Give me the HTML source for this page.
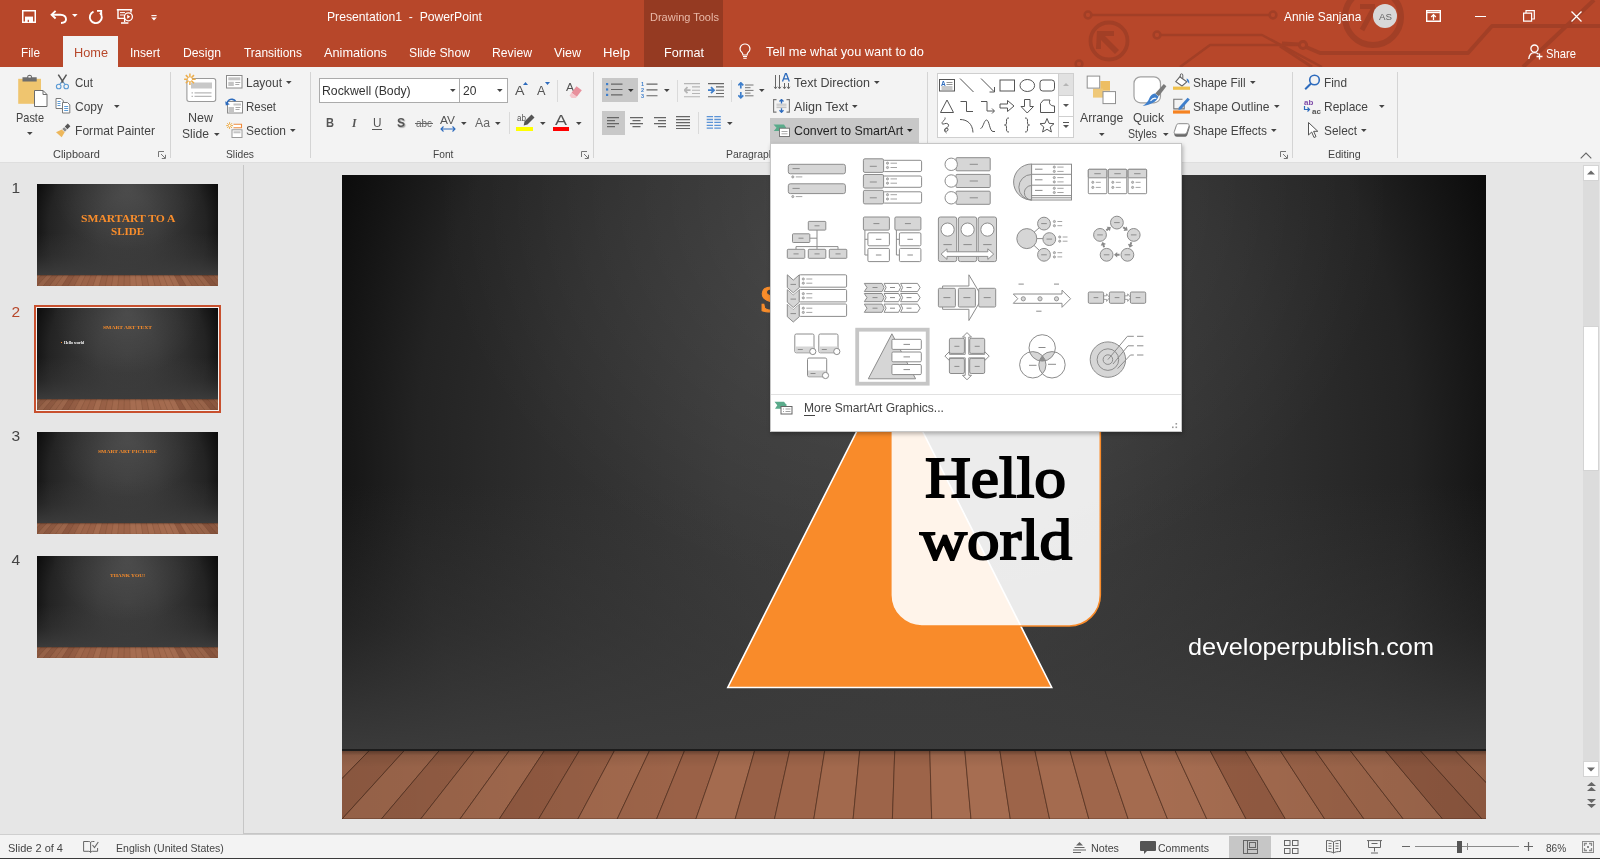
<!DOCTYPE html>
<html lang="en"><head><meta charset="utf-8"><title>Presentation1 - PowerPoint</title>
<style>
*{margin:0;padding:0}
html,body{width:1600px;height:859px;overflow:hidden;background:#e6e6e6}
body{font-family:"Liberation Sans",sans-serif;}
#app{position:relative;width:1600px;height:859px;overflow:hidden;background:#e6e6e6;will-change:transform}
.b{position:absolute;display:block}
.t{position:absolute;white-space:pre;line-height:1;transform-origin:0 50%;font-family:"Liberation Sans",sans-serif}

</style></head>
<body>
<div id="app">
<div class="b" style="left:0px;top:0px;width:1600px;height:67px;background:#B7472A;"></div>
<div class="b" style="left:644px;top:0px;width:79px;height:67px;background:#953a22;"></div>
<div class="b" style="left:63px;top:36px;width:55px;height:31px;background:#f3f3f3;"></div>
<div class="b" style="left:0px;top:67px;width:1600px;height:95px;background:#f3f3f3;"></div>
<div class="b" style="left:0px;top:162px;width:1600px;height:1px;background:#dedede;"></div>
<div class="b" style="left:0px;top:163px;width:1600px;height:672px;background:#e6e6e6;"></div>
<div class="b" style="left:243px;top:165px;width:1px;height:669px;background:#c6c6c6;"></div>
<div class="b" style="left:244px;top:833px;width:1356px;height:1px;background:#c6c6c6;"></div>
<div class="b" style="left:0px;top:835px;width:1600px;height:24px;background:#f3f3f3;"></div>
<div class="b" style="left:0px;top:834px;width:1600px;height:1px;background:#cfcfcf;"></div>
<div class="b" style="left:0px;top:858px;width:1600px;height:1px;background:#3a3a3a;"></div>
<div id="editor">
<div class="b" id="slide" style="left:342px;top:175px;width:1144px;height:644px;background:linear-gradient(to top, rgba(60,60,60,.96) 11%, rgba(60,60,60,.8) 17%, rgba(60,60,60,.42) 30%, rgba(60,60,60,0) 52%),radial-gradient(ellipse 42% 62% at 50% 4%, rgba(255,255,255,.1) 0%, rgba(255,255,255,.05) 45%, rgba(255,255,255,0) 100%),radial-gradient(ellipse 58% 120% at 50% 45%, #3d3d3d 0%, #393939 28%, #2e2e2e 55%, #232323 75%, #0a0a0a 95%, #000 100%);overflow:hidden">
<svg class="b" style="left:0;top:575px" width="1144" height="69" viewBox="0 0 1144 69"><g id="floorG"><rect width="1144" height="69" fill="#9d6449"/><path d="M-112.2 0L-77.2 0L-157.1 69L-196.4 69z" fill="#a46b4f" stroke="#4e2e20" stroke-opacity=".75" stroke-width=".9"/><path d="M-77.2 0L-42.2 0L-117.8 69L-157.1 69z" fill="#a46b4f" stroke="#4e2e20" stroke-opacity=".75" stroke-width=".9"/><path d="M-42.2 0L-7.2 0L-78.5 69L-117.8 69z" fill="#a46b4f" stroke="#4e2e20" stroke-opacity=".75" stroke-width=".9"/><path d="M-7.2 0L27.8 0L-39.2 69L-78.5 69z" fill="#a66d51" stroke="#4e2e20" stroke-opacity=".75" stroke-width=".9"/><path d="M27.8 0L62.8 0L0.1 69L-39.2 69z" fill="#986046" stroke="#4e2e20" stroke-opacity=".75" stroke-width=".9"/><path d="M62.8 0L97.8 0L39.4 69L0.1 69z" fill="#a46b4f" stroke="#4e2e20" stroke-opacity=".75" stroke-width=".9"/><path d="M97.8 0L132.8 0L78.7 69L39.4 69z" fill="#986046" stroke="#4e2e20" stroke-opacity=".75" stroke-width=".9"/><path d="M132.8 0L167.8 0L118.0 69L78.7 69z" fill="#a2694d" stroke="#4e2e20" stroke-opacity=".75" stroke-width=".9"/><path d="M167.8 0L202.8 0L157.3 69L118.0 69z" fill="#a46b4f" stroke="#4e2e20" stroke-opacity=".75" stroke-width=".9"/><path d="M202.8 0L237.8 0L196.6 69L157.3 69z" fill="#935b42" stroke="#4e2e20" stroke-opacity=".75" stroke-width=".9"/><path d="M237.8 0L272.8 0L235.9 69L196.6 69z" fill="#986046" stroke="#4e2e20" stroke-opacity=".75" stroke-width=".9"/><path d="M272.8 0L307.8 0L275.2 69L235.9 69z" fill="#a2694d" stroke="#4e2e20" stroke-opacity=".75" stroke-width=".9"/><path d="M307.8 0L342.8 0L314.6 69L275.2 69z" fill="#9d6449" stroke="#4e2e20" stroke-opacity=".75" stroke-width=".9"/><path d="M342.8 0L377.8 0L353.9 69L314.6 69z" fill="#9a6147" stroke="#4e2e20" stroke-opacity=".75" stroke-width=".9"/><path d="M377.8 0L412.8 0L393.2 69L353.9 69z" fill="#a46b4f" stroke="#4e2e20" stroke-opacity=".75" stroke-width=".9"/><path d="M412.8 0L447.8 0L432.5 69L393.2 69z" fill="#986046" stroke="#4e2e20" stroke-opacity=".75" stroke-width=".9"/><path d="M447.8 0L482.8 0L471.8 69L432.5 69z" fill="#9d6449" stroke="#4e2e20" stroke-opacity=".75" stroke-width=".9"/><path d="M482.8 0L517.8 0L511.1 69L471.8 69z" fill="#a2694d" stroke="#4e2e20" stroke-opacity=".75" stroke-width=".9"/><path d="M517.8 0L552.8 0L550.4 69L511.1 69z" fill="#9d6449" stroke="#4e2e20" stroke-opacity=".75" stroke-width=".9"/><path d="M552.8 0L587.8 0L589.7 69L550.4 69z" fill="#9d6449" stroke="#4e2e20" stroke-opacity=".75" stroke-width=".9"/><path d="M587.8 0L622.8 0L629.0 69L589.7 69z" fill="#a66d51" stroke="#4e2e20" stroke-opacity=".75" stroke-width=".9"/><path d="M622.8 0L657.8 0L668.3 69L629.0 69z" fill="#a66d51" stroke="#4e2e20" stroke-opacity=".75" stroke-width=".9"/><path d="M657.8 0L692.8 0L707.6 69L668.3 69z" fill="#9d6449" stroke="#4e2e20" stroke-opacity=".75" stroke-width=".9"/><path d="M692.8 0L727.8 0L746.9 69L707.6 69z" fill="#a46b4f" stroke="#4e2e20" stroke-opacity=".75" stroke-width=".9"/><path d="M727.8 0L762.8 0L786.2 69L746.9 69z" fill="#9f664b" stroke="#4e2e20" stroke-opacity=".75" stroke-width=".9"/><path d="M762.8 0L797.8 0L825.5 69L786.2 69z" fill="#a46b4f" stroke="#4e2e20" stroke-opacity=".75" stroke-width=".9"/><path d="M797.8 0L832.8 0L864.8 69L825.5 69z" fill="#a66d51" stroke="#4e2e20" stroke-opacity=".75" stroke-width=".9"/><path d="M832.8 0L867.8 0L904.1 69L864.8 69z" fill="#a66d51" stroke="#4e2e20" stroke-opacity=".75" stroke-width=".9"/><path d="M867.8 0L902.8 0L943.4 69L904.1 69z" fill="#935b42" stroke="#4e2e20" stroke-opacity=".75" stroke-width=".9"/><path d="M902.8 0L937.8 0L982.7 69L943.4 69z" fill="#a46b4f" stroke="#4e2e20" stroke-opacity=".75" stroke-width=".9"/><path d="M937.8 0L972.8 0L1022.0 69L982.7 69z" fill="#9d6449" stroke="#4e2e20" stroke-opacity=".75" stroke-width=".9"/><path d="M972.8 0L1007.8 0L1061.3 69L1022.0 69z" fill="#a2694d" stroke="#4e2e20" stroke-opacity=".75" stroke-width=".9"/><path d="M1007.8 0L1042.8 0L1100.6 69L1061.3 69z" fill="#a46b4f" stroke="#4e2e20" stroke-opacity=".75" stroke-width=".9"/><path d="M1042.8 0L1077.8 0L1140.0 69L1100.6 69z" fill="#935b42" stroke="#4e2e20" stroke-opacity=".75" stroke-width=".9"/><path d="M1077.8 0L1112.8 0L1179.3 69L1140.0 69z" fill="#9a6147" stroke="#4e2e20" stroke-opacity=".75" stroke-width=".9"/><path d="M1112.8 0L1147.8 0L1218.6 69L1179.3 69z" fill="#a2694d" stroke="#4e2e20" stroke-opacity=".75" stroke-width=".9"/><path d="M1147.8 0L1182.8 0L1257.9 69L1218.6 69z" fill="#935b42" stroke="#4e2e20" stroke-opacity=".75" stroke-width=".9"/><path d="M1182.8 0L1217.8 0L1297.2 69L1257.9 69z" fill="#9f664b" stroke="#4e2e20" stroke-opacity=".75" stroke-width=".9"/><path d="M1217.8 0L1252.8 0L1336.5 69L1297.2 69z" fill="#a66d51" stroke="#4e2e20" stroke-opacity=".75" stroke-width=".9"/><path d="M1252.8 0L1287.8 0L1375.8 69L1336.5 69z" fill="#935b42" stroke="#4e2e20" stroke-opacity=".75" stroke-width=".9"/><defs><linearGradient id="fg" x1="0" y1="0" x2="0" y2="1"><stop offset="0" stop-color="#000" stop-opacity=".38"/><stop offset=".08" stop-color="#000" stop-opacity=".08"/><stop offset=".25" stop-color="#000" stop-opacity="0"/><stop offset="1" stop-color="#000" stop-opacity="0"/></linearGradient><linearGradient id="fh" x1="0" y1="0" x2="1" y2="0"><stop offset="0" stop-color="#000" stop-opacity=".1"/><stop offset=".3" stop-color="#000" stop-opacity="0"/><stop offset=".7" stop-color="#000" stop-opacity="0"/><stop offset="1" stop-color="#000" stop-opacity=".1"/></linearGradient></defs><rect width="1144" height="69" fill="url(#fg)"/><rect width="1144" height="69" fill="url(#fh)"/></g></svg>
<div class="b" style="left:0;top:574px;width:1144px;height:2px;background:#1c1c1c"></div>
</div>
<span class="t" style="left:760.0px;top:279.7px;font-size:38px;color:#F98D2B;transform:scaleX(1.0410);font-weight:700;font-family:'Liberation Serif',serif;-webkit-text-stroke:1px #F98D2B;">S</span>
<svg class="b" style="left:700px;top:350px" width="450" height="350" viewBox="700 350 450 350"><path d="M889.7 366L1051.7 687.5L727.8 687.5z" fill="#F98B2A" stroke="#fff" stroke-width="1.6" stroke-linejoin="miter"/><rect x="890.8" y="380" width="209.5" height="246" rx="31" ry="31" fill="#fff" fill-opacity=".9" stroke="#F98B2A" stroke-width="1.6"/></svg>
<span class="t" style="left:925.0px;top:449.1px;font-size:58px;color:#000;transform:scaleX(1.0943);font-family:'Liberation Serif',serif;-webkit-text-stroke:1.9px #000;">Hello</span>
<span class="t" style="left:919.5px;top:510.5px;font-size:58px;color:#000;transform:scaleX(1.1233);font-family:'Liberation Serif',serif;-webkit-text-stroke:1.9px #000;">world</span>
<span class="t" style="left:1188.0px;top:634.8px;font-size:24px;color:#fff;transform:scaleX(1.0536);">developerpublish.com</span>
</div>
<div id="thumbnails">
<span class="t" style="left:11.5px;top:180.3px;font-size:15.5px;color:#444;transform:scaleX(1.0000);">1</span>
<div class="b" style="left:37px;top:184px;width:181px;height:102px;background:linear-gradient(to top, rgba(60,60,60,.96) 11%, rgba(60,60,60,.8) 17%, rgba(60,60,60,.42) 30%, rgba(60,60,60,0) 52%),radial-gradient(ellipse 42% 62% at 50% 4%, rgba(255,255,255,.1) 0%, rgba(255,255,255,.05) 45%, rgba(255,255,255,0) 100%),radial-gradient(ellipse 58% 120% at 50% 45%, #3d3d3d 0%, #393939 28%, #2e2e2e 55%, #232323 75%, #0a0a0a 95%, #000 100%);overflow:hidden">
<svg class="b" style="left:0;top:91px" width="181" height="11" viewBox="0 0 1144 69" preserveAspectRatio="none"><use href="#floorG"/></svg>
</div>
<span class="t" style="left:11.5px;top:304.3px;font-size:15.5px;color:#B7472A;transform:scaleX(1.0000);">2</span>
<div class="b" style="left:34px;top:305px;width:187px;height:108px;background:#f3f3f3;border:2px solid #C8502E;box-sizing:border-box;"></div>
<div class="b" style="left:37px;top:308px;width:181px;height:102px;background:linear-gradient(to top, rgba(60,60,60,.96) 11%, rgba(60,60,60,.8) 17%, rgba(60,60,60,.42) 30%, rgba(60,60,60,0) 52%),radial-gradient(ellipse 42% 62% at 50% 4%, rgba(255,255,255,.1) 0%, rgba(255,255,255,.05) 45%, rgba(255,255,255,0) 100%),radial-gradient(ellipse 58% 120% at 50% 45%, #3d3d3d 0%, #393939 28%, #2e2e2e 55%, #232323 75%, #0a0a0a 95%, #000 100%);overflow:hidden">
<svg class="b" style="left:0;top:91px" width="181" height="11" viewBox="0 0 1144 69" preserveAspectRatio="none"><use href="#floorG"/></svg>
</div>
<span class="t" style="left:11.5px;top:428.3px;font-size:15.5px;color:#444;transform:scaleX(1.0000);">3</span>
<div class="b" style="left:37px;top:432px;width:181px;height:102px;background:linear-gradient(to top, rgba(60,60,60,.96) 11%, rgba(60,60,60,.8) 17%, rgba(60,60,60,.42) 30%, rgba(60,60,60,0) 52%),radial-gradient(ellipse 42% 62% at 50% 4%, rgba(255,255,255,.1) 0%, rgba(255,255,255,.05) 45%, rgba(255,255,255,0) 100%),radial-gradient(ellipse 58% 120% at 50% 45%, #3d3d3d 0%, #393939 28%, #2e2e2e 55%, #232323 75%, #0a0a0a 95%, #000 100%);overflow:hidden">
<svg class="b" style="left:0;top:91px" width="181" height="11" viewBox="0 0 1144 69" preserveAspectRatio="none"><use href="#floorG"/></svg>
</div>
<span class="t" style="left:11.5px;top:552.3px;font-size:15.5px;color:#444;transform:scaleX(1.0000);">4</span>
<div class="b" style="left:37px;top:556px;width:181px;height:102px;background:linear-gradient(to top, rgba(60,60,60,.96) 11%, rgba(60,60,60,.8) 17%, rgba(60,60,60,.42) 30%, rgba(60,60,60,0) 52%),radial-gradient(ellipse 42% 62% at 50% 4%, rgba(255,255,255,.1) 0%, rgba(255,255,255,.05) 45%, rgba(255,255,255,0) 100%),radial-gradient(ellipse 58% 120% at 50% 45%, #3d3d3d 0%, #393939 28%, #2e2e2e 55%, #232323 75%, #0a0a0a 95%, #000 100%);overflow:hidden">
<svg class="b" style="left:0;top:91px" width="181" height="11" viewBox="0 0 1144 69" preserveAspectRatio="none"><use href="#floorG"/></svg>
</div>
<span class="t" style="left:80.5px;top:213.9px;font-size:10.5px;color:#F98D2B;transform:scaleX(1.1062);font-weight:700;font-family:'Liberation Serif',serif;">SMARTART TO A</span>
<span class="t" style="left:111.0px;top:227.1px;font-size:10.5px;color:#F98D2B;transform:scaleX(1.0534);font-weight:700;font-family:'Liberation Serif',serif;">SLIDE</span>
<span class="t" style="left:103.0px;top:324.9px;font-size:5px;color:#F98D2B;transform:scaleX(1.1179);font-weight:700;font-family:'Liberation Serif',serif;">SMART ART TEXT</span>
<div class="b" style="left:61px;top:342px;width:1px;height:1px;background:#F98D2B;"></div>
<span class="t" style="left:64.0px;top:341.6px;font-size:3.6px;color:#fff;transform:scaleX(1.1051);font-weight:700;font-family:'Liberation Serif',serif;">Hello world</span>
<span class="t" style="left:98.0px;top:448.9px;font-size:5px;color:#F98D2B;transform:scaleX(1.1172);font-weight:700;font-family:'Liberation Serif',serif;">SMART ART PICTURE</span>
<span class="t" style="left:110.0px;top:573.4px;font-size:5px;color:#F98D2B;transform:scaleX(1.0878);font-weight:700;font-family:'Liberation Serif',serif;">THANK YOU!</span>
</div>
<div id="vscroll">
<div class="b" style="left:1583px;top:165px;width:16px;height:612px;background:#dcdcdc;"></div>
<div class="b" style="left:1583px;top:165px;width:16px;height:16px;background:#fff;border:1px solid #d4d4d4;box-sizing:border-box;"></div>
<svg class="b" style="left:1587px;top:170px;" width="8" height="5" viewBox="0 0 8 5"><path d="M0 4.500L4 .4L8 4.500z" fill="#6a6a6a"/></svg>
<div class="b" style="left:1583px;top:326px;width:16px;height:145px;background:#fff;border:1px solid #d4d4d4;box-sizing:border-box;"></div>
<div class="b" style="left:1583px;top:761px;width:16px;height:16px;background:#fff;border:1px solid #d4d4d4;box-sizing:border-box;"></div>
<svg class="b" style="left:1587px;top:767px;" width="8" height="5" viewBox="0 0 8 5"><path d="M0 .4L4 4.500L8 .4z" fill="#6a6a6a"/></svg>
<svg class="b" style="left:1587px;top:782px;" width="9" height="9" viewBox="0 0 9 9"><path d="M0 4L4.500 0L9 4z M0 9L4.500 5L9 9z" fill="#666"/></svg>
<svg class="b" style="left:1587px;top:799px;" width="9" height="9" viewBox="0 0 9 9"><path d="M0 0L4.500 4L9 0z M0 5L4.500 9L9 5z" fill="#666"/></svg>
</div>
<div id="titlebar">
<svg class="b" style="left:1040px;top:0" width="560" height="67" viewBox="1040 0 560 67"><g fill="none" stroke="#a23f26" stroke-width="2.5" stroke-linecap="butt" stroke-linejoin="round"><path d="M1091.500 15H1269.500"/><circle cx="1088" cy="15" r="3.400"/><circle cx="1273" cy="15" r="3.400"/><path d="M1160.500 35H1262L1322 67"/><circle cx="1157" cy="35" r="3.400"/><path d="M1299.500 45H1210L1180 67"/><circle cx="1109" cy="41" r="18.500" stroke-width="3.800"/><circle cx="1079" cy="64" r="3.400"/></g><g fill="none" stroke="#a23f26" stroke-width="4" stroke-linejoin="round"><circle cx="1303" cy="45" r="3.600" stroke-width="3"/><circle cx="1373" cy="17" r="28" stroke-width="6"/><path d="M1360 6.500h15M1374.500 7L1362 30" stroke-width="5"/><path d="M1306 47L1320 53H1468L1492 26H1600"/><path d="M1280 46L1312 67" stroke-width="3"/><path d="M1282 43L1299 44" stroke-width="3"/><path d="M1523 67L1594 0"/></g><path d="M1097 31h17v5h-9l14 14-4 4-14-14v9h-5z" fill="#a23f26"/></svg>
<svg class="b" style="left:22px;top:10px;" width="15" height="14" viewBox="0 0 15 14"><path d="M.75.75h12.500v11.500H.75z" fill="none" stroke="#fff" stroke-width="1.500"/><path d="M3 6.600h8v6H3z" fill="#fff"/><rect x="5.700" y="9.800" width="1.200" height="2.300" fill="#B7472A"/></svg>
<svg class="b" style="left:50px;top:9px;" width="18" height="16" viewBox="0 0 18 16"><path d="M5.600 1.900L1.600 5.700L5.600 9.500" fill="none" stroke="#fff" stroke-width="1.900" stroke-linejoin="miter"/><path d="M2 5.700H10.500C14 5.700 16 7.800 16 10.300C16 12.800 13.800 14 11 14" fill="none" stroke="#fff" stroke-width="1.900"/></svg>
<svg class="b" style="left:72px;top:14px;" width="6" height="3" viewBox="0 0 6 3"><path d="M0 0h5.6L2.8 3z" fill="#fff"/></svg>
<svg class="b" style="left:88px;top:8px;" width="16" height="17" viewBox="0 0 16 17"><path d="M5.500 3.600A6 6 0 1 0 12 4.800" fill="none" stroke="#fff" stroke-width="1.900"/><path d="M9 2.900H13.300V7" fill="none" stroke="#fff" stroke-width="1.700"/></svg>
<svg class="b" style="left:116px;top:9px;" width="18" height="15" viewBox="0 0 18 15"><path d="M.8.8h15.4M2 1v8.4h7.2M15 1v2.6" fill="none" stroke="#fff" stroke-width="1.4"/><circle cx="12.4" cy="7.8" r="4" fill="none" stroke="#fff" stroke-width="1.3"/><path d="M11.2 5.8v4l3-2z" fill="#fff"/><path d="M4 3.6h5M4 6h4" stroke="#fff" stroke-width="1"/><path d="M8.6 10v3M5 14h7.4" stroke="#fff" stroke-width="1.3"/></svg>
<svg class="b" style="left:151px;top:15px;" width="6" height="6" viewBox="0 0 6 6"><path d="M.4.6h5.2" stroke="#fff" stroke-width="1.1"/><path d="M.2 2.6h5.6L3 5.6z" fill="#fff"/></svg>
<span class="t" style="left:327.0px;top:11.3px;font-size:12.2px;color:#fff;transform:scaleX(0.9981);">Presentation1  -  PowerPoint</span>
<span class="t" style="left:650.0px;top:11.8px;font-size:11.2px;color:#e9b9a8;transform:scaleX(0.9838);">Drawing Tools</span>
<span class="t" style="left:1283.6px;top:11.3px;font-size:12.2px;color:#fff;transform:scaleX(0.9752);">Annie Sanjana</span>
<div class="b" style="left:1373px;top:4px;width:24px;height:24px;border-radius:12px;background:#d8d8d8"></div>
<span class="t" style="left:1378.6px;top:11.5px;font-size:9.6px;color:#666;transform:scaleX(1.0151);">AS</span>
<svg class="b" style="left:1426px;top:10px;" width="15" height="12" viewBox="0 0 15 12"><path d="M.7.7h13.6v10.6H.7z" fill="none" stroke="#fff" stroke-width="1.4"/><path d="M1 2.6h13" stroke="#fff" stroke-width="1.2"/><path d="M7.5 10V5M5.2 7L7.5 4.6 9.800 7" fill="none" stroke="#fff" stroke-width="1.3"/></svg>
<div class="b" style="left:1475px;top:16px;width:11px;height:1px;background:#fff;"></div>
<svg class="b" style="left:1523px;top:10px;" width="12" height="12" viewBox="0 0 12 12"><path d="M.6 3.2h8v8h-8z" fill="none" stroke="#fff" stroke-width="1.2"/><path d="M3 3V.7h8.300v8.300H9" fill="none" stroke="#fff" stroke-width="1.2"/></svg>
<svg class="b" style="left:1571px;top:11px;" width="11" height="11" viewBox="0 0 11 11"><path d="M.5.5l10 10M10.5.5l-10 10" stroke="#fff" stroke-width="1.3"/></svg>
<span class="t" style="left:21.0px;top:46.7px;font-size:12.6px;color:#fff;transform:scaleX(0.9358);">File</span>
<span class="t" style="left:73.6px;top:46.7px;font-size:12.6px;color:#B7472A;transform:scaleX(1.0116);">Home</span>
<span class="t" style="left:130.0px;top:46.7px;font-size:12.6px;color:#fff;transform:scaleX(0.9520);">Insert</span>
<span class="t" style="left:182.6px;top:46.7px;font-size:12.6px;color:#fff;transform:scaleX(0.9688);">Design</span>
<span class="t" style="left:243.6px;top:46.7px;font-size:12.6px;color:#fff;transform:scaleX(0.9484);">Transitions</span>
<span class="t" style="left:324.0px;top:46.7px;font-size:12.6px;color:#fff;transform:scaleX(1.0107);">Animations</span>
<span class="t" style="left:409.0px;top:46.7px;font-size:12.6px;color:#fff;transform:scaleX(0.9676);">Slide Show</span>
<span class="t" style="left:492.0px;top:46.7px;font-size:12.6px;color:#fff;transform:scaleX(0.9682);">Review</span>
<span class="t" style="left:554.0px;top:46.7px;font-size:12.6px;color:#fff;transform:scaleX(0.9969);">View</span>
<span class="t" style="left:603.0px;top:46.7px;font-size:12.6px;color:#fff;transform:scaleX(1.0419);">Help</span>
<span class="t" style="left:664.0px;top:46.7px;font-size:12.6px;color:#fff;transform:scaleX(1.0024);">Format</span>
<svg class="b" style="left:739px;top:43px;" width="12" height="17" viewBox="0 0 12 17"><path d="M6 1a4.800 4.800 0 0 1 3 8.600c-.7.7-.9 1.400-.9 2.400H3.900c0-1-.2-1.700-.9-2.400A4.800 4.800 0 0 1 6 1z" fill="none" stroke="#fff" stroke-width="1.2"/><path d="M4 13.500h4M4.300 15.300h3.400" stroke="#fff" stroke-width="1.1"/></svg>
<span class="t" style="left:766.0px;top:46.4px;font-size:12.4px;color:#fff;transform:scaleX(1.0326);">Tell me what you want to do</span>
<svg class="b" style="left:1528px;top:44px;" width="15" height="16" viewBox="0 0 15 16"><circle cx="6.500" cy="4.600" r="3.600" fill="none" stroke="#fff" stroke-width="1.3"/><path d="M.8 15c.3-4 2.500-6.400 5.700-6.400 1.600 0 3 .6 4 1.700" fill="none" stroke="#fff" stroke-width="1.3"/><path d="M11.500 9.500v6M8.500 12.500h6" stroke="#fff" stroke-width="1.3"/></svg>
<span class="t" style="left:1546.0px;top:47.8px;font-size:12.6px;color:#fff;transform:scaleX(0.8922);">Share</span>
</div>
<div id="ribbon">
<svg class="b" style="left:17px;top:74px;" width="31" height="33" viewBox="0 0 31 33"><path d="M1.200 4.800h22.800v25H1.200z" fill="#EFC56F"/><path d="M5.500 3.200h4.600c.2-1.600 1.200-2.400 2.500-2.400s2.300.8 2.500 2.400h4.600v4.200H5.500z" fill="#6d6d6d"/><rect x="11.400" y="2" width="2.400" height="1.600" fill="#f3f3f3"/><path d="M17.500 16.500h8.500l4 4V32.500h-12.500z" fill="#fff" stroke="#6d6d6d" stroke-width="1"/><path d="M26 16.500v4h4" fill="none" stroke="#6d6d6d" stroke-width="1"/></svg>
<span class="t" style="left:16.0px;top:111.9px;font-size:12.2px;color:#444;transform:scaleX(0.8975);">Paste</span>
<svg class="b" style="left:27px;top:132px;" width="6" height="3" viewBox="0 0 6 3"><path d="M0 0h5.6L2.8 3z" fill="#444"/></svg>
<svg class="b" style="left:55px;top:74px;" width="15" height="16" viewBox="0 0 15 16"><path d="M3.300 .6l5.300 8.200M11.500 .6L6.200 8.800" stroke="#555" stroke-width="1.500" fill="none"/><path d="M8.300 8.300l2 2.200M6.500 8.300l-2 2.200" stroke="#5b9bd5" stroke-width="1.100" fill="none"/><circle cx="3.700" cy="12.500" r="2.300" fill="none" stroke="#5b9bd5" stroke-width="1.100"/><circle cx="11.200" cy="12.500" r="2.300" fill="none" stroke="#5b9bd5" stroke-width="1.100"/></svg>
<span class="t" style="left:75.0px;top:76.5px;font-size:12.2px;color:#444;transform:scaleX(0.9481);">Cut</span>
<svg class="b" style="left:55px;top:98px;" width="16" height="16" viewBox="0 0 16 16"><path d="M1 .5h5l2.300 2.300v7.700H1z" fill="#fff" stroke="#7a7a7a"/><path d="M7.500 4.500h5l2.300 2.300v8.200H7.500z" fill="#fff" stroke="#7a7a7a"/><path d="M9.200 8.500h4M9.200 10.500h4M9.200 12.500h4" stroke="#5b9bd5" stroke-width="1"/><path d="M2.500 3.500h3M2.500 5.500h3M2.500 7.500h3" stroke="#5b9bd5" stroke-width="1"/></svg>
<span class="t" style="left:75.0px;top:100.5px;font-size:12.2px;color:#444;transform:scaleX(0.9831);">Copy</span>
<svg class="b" style="left:114px;top:105px;" width="6" height="3" viewBox="0 0 6 3"><path d="M0 0h5.6L2.8 3z" fill="#444"/></svg>
<svg class="b" style="left:56px;top:123px;" width="15" height="15" viewBox="0 0 15 15"><path d="M11.800 .6l2.600 2.600-3 3-2.600-2.600z" fill="#555"/><path d="M8.200 4.200l2.600 2.600-1.900 1.900-2.600-2.600z" fill="#8a8a8a"/><path d="M5.800 6.400l2.900 2.900-3 5-5.700-5z" fill="#EDB75B"/></svg>
<span class="t" style="left:75.0px;top:124.5px;font-size:12.2px;color:#444;transform:scaleX(0.9915);">Format Painter</span>
<span class="t" style="left:53.0px;top:148.0px;font-size:11.6px;color:#444;transform:scaleX(0.9466);">Clipboard</span>
<svg class="b" style="left:158px;top:151px;" width="8" height="8" viewBox="0 0 8 8"><path d="M.5 6V.5H6" fill="none" stroke="#777" stroke-width="1"/><path d="M3 3l4 4M7.500 3.800V7.500H3.800" fill="none" stroke="#777" stroke-width="1"/></svg>
<div class="b" style="left:170px;top:72px;width:1px;height:86px;background:#d4d4d4;"></div>
<svg class="b" style="left:183px;top:73px;" width="34" height="30" viewBox="0 0 34 30"><rect x="3.900" y="5.500" width="28.800" height="23" rx="2.200" fill="#fff" stroke="#9a9a9a" stroke-width="1.100"/><rect x="8" y="9.500" width="21" height="6" fill="#c8c8c8"/><path d="M8.500 19.800h1.500M11.500 19.800h17M8.500 23.300h1.500M11.500 23.300h17" stroke="#b8b8b8" stroke-width="1.200"/><g stroke="#EDAE4C" stroke-width="1.500"><path d="M6.900 .4v11.600M1.100 6.200h11.600M2.800 2.100l8.200 8.200M11 2.100l-8.200 8.200"/></g><circle cx="6.900" cy="6.200" r="2" fill="#fff"/></svg>
<span class="t" style="left:188.0px;top:111.9px;font-size:12.2px;color:#444;transform:scaleX(1.0243);">New</span>
<span class="t" style="left:182.0px;top:127.5px;font-size:12.2px;color:#444;transform:scaleX(0.9952);">Slide</span>
<svg class="b" style="left:214px;top:133px;" width="6" height="3" viewBox="0 0 6 3"><path d="M0 0h5.6L2.8 3z" fill="#444"/></svg>
<svg class="b" style="left:226px;top:75px;" width="17" height="14" viewBox="0 0 17 14"><rect x=".5" y=".5" width="15.500" height="12.500" fill="#fff" stroke="#8a8a8a"/><rect x="2.300" y="2.300" width="12" height="3" fill="#c4c4c4"/><rect x="2.300" y="6.800" width="5.500" height="4.200" fill="#c4c4c4"/><path d="M9.300 7.500h5M9.300 9.500h4" stroke="#a0a0a0" stroke-width=".9"/></svg>
<span class="t" style="left:246.0px;top:76.5px;font-size:12.2px;color:#444;transform:scaleX(0.9828);">Layout</span>
<svg class="b" style="left:286px;top:81px;" width="6" height="3" viewBox="0 0 6 3"><path d="M0 0h5.6L2.8 3z" fill="#444"/></svg>
<svg class="b" style="left:225px;top:98px;" width="18" height="16" viewBox="0 0 18 16"><rect x="2.500" y="3.500" width="15" height="11.500" fill="#fff" stroke="#8a8a8a"/><rect x="3.500" y="9" width="5.500" height="5.500" fill="#c4c4c4"/><rect x="8.500" y="5.500" width="7.500" height="2" fill="#c4c4c4"/><path d="M10.500 9.500h5M10.500 11.500h4" stroke="#a0a0a0" stroke-width=".9"/><path d="M2 5.500C2.500 2.500 5 1 7.500 1.300c1.300.200 2.300.800 3 1.700" fill="none" stroke="#2d6bbd" stroke-width="1.700"/><path d="M.2 3.200l.6 4.300 4-1.300z" fill="#2d6bbd"/></svg>
<span class="t" style="left:246.0px;top:100.5px;font-size:12.2px;color:#444;transform:scaleX(0.9413);">Reset</span>
<svg class="b" style="left:226px;top:122px;" width="18" height="16" viewBox="0 0 18 16"><path d="M7.500 2.300H15.500V5.800H7.500" fill="#fff" stroke="#EE8A3C" stroke-width="1.100"/><rect x="6" y="7.800" width="10" height="7.700" fill="#fff" stroke="#9a9a9a"/><rect x="7.500" y="9.300" width="7" height="2" fill="#c4c4c4"/><g stroke="#EDAE4C" stroke-width="1"><path d="M3.600 .2v6.800M.2 3.600h6.800M1.200 1.200l4.800 4.800M6 1.200L1.200 6"/></g><circle cx="3.600" cy="3.600" r="1.100" fill="#fff"/></svg>
<span class="t" style="left:246.0px;top:124.5px;font-size:12.2px;color:#444;transform:scaleX(0.9830);">Section</span>
<svg class="b" style="left:289.5px;top:129px;" width="6" height="3" viewBox="0 0 6 3"><path d="M0 0h5.6L2.8 3z" fill="#444"/></svg>
<span class="t" style="left:226.0px;top:148.0px;font-size:11.6px;color:#444;transform:scaleX(0.8862);">Slides</span>
<div class="b" style="left:310px;top:72px;width:1px;height:86px;background:#d4d4d4;"></div>
<div class="b" style="left:319px;top:78px;width:141px;height:25px;background:#fff;border:1px solid #ababab;box-sizing:border-box;"></div>
<div class="b" style="left:459px;top:78px;width:49px;height:25px;background:#fff;border:1px solid #ababab;box-sizing:border-box;"></div>
<span class="t" style="left:321.6px;top:84.5px;font-size:12.2px;color:#333;transform:scaleX(1.0075);">Rockwell (Body)</span>
<svg class="b" style="left:450px;top:89px;" width="6" height="3" viewBox="0 0 6 3"><path d="M0 0h5.6L2.8 3z" fill="#444"/></svg>
<span class="t" style="left:462.6px;top:84.5px;font-size:12.2px;color:#333;transform:scaleX(0.9874);">20</span>
<svg class="b" style="left:497px;top:89px;" width="6" height="3" viewBox="0 0 6 3"><path d="M0 0h5.6L2.8 3z" fill="#444"/></svg>
<span class="t" style="left:515.0px;top:84.2px;font-size:13.5px;color:#555;transform:scaleX(1.0550);">A</span>
<svg class="b" style="left:523px;top:82px;" width="5" height="3" viewBox="0 0 5 3"><path d="M0 3L2.500 0L5 3z" fill="#2d6bbd"/></svg>
<span class="t" style="left:537.0px;top:85.4px;font-size:12px;color:#555;transform:scaleX(1.0619);">A</span>
<svg class="b" style="left:545px;top:82px;" width="5" height="3" viewBox="0 0 5 3"><path d="M0 0L2.500 3L5 0z" fill="#2d6bbd"/></svg>
<div class="b" style="left:557px;top:80px;width:1px;height:22px;background:#dadada;"></div>
<span class="t" style="left:566.0px;top:81.9px;font-size:11.5px;color:#555;transform:scaleX(1.0429);">A</span>
<svg class="b" style="left:568px;top:85px;" width="15" height="13" viewBox="0 0 15 13"><path d="M8.500 1.200l5.300 4-5 6.600-5.300-4z" fill="#E8909C"/><path d="M3.500 7.800l5.300 4-1 1.200H3.600L1.500 10.600z" fill="#f5c6cc"/></svg>
<span class="t" style="left:326.0px;top:116.9px;font-size:12.6px;color:#555;transform:scaleX(0.8792);font-weight:700;">B</span>
<span class="t" style="left:351.5px;top:116.9px;font-size:12.6px;color:#555;transform:scaleX(0.9178);font-weight:700;font-family:'Liberation Serif',serif;font-style:italic;">I</span>
<span class="t" style="left:372.5px;top:116.5px;font-size:12.2px;color:#555;transform:scaleX(0.9647);">U</span>
<div class="b" style="left:372px;top:129px;width:10px;height:1px;background:#555;"></div>
<span class="t" style="left:397.0px;top:115.8px;font-size:13px;color:#555;transform:scaleX(0.9226);font-weight:700;text-shadow:1px 1px 1px #aaa;">S</span>
<span class="t" style="left:416.0px;top:117.9px;font-size:10.5px;color:#666;transform:scaleX(0.9451);">abc</span>
<div class="b" style="left:415px;top:123px;width:18px;height:1px;background:#666;"></div>
<span class="t" style="left:440.0px;top:114.8px;font-size:11px;color:#555;transform:scaleX(1.0824);">AV</span>
<svg class="b" style="left:440px;top:126px;" width="16" height="6" viewBox="0 0 16 6"><path d="M1 3h14M3.500 .5L1 3l2.500 2.500M12.500 .5L15 3l-2.500 2.500" fill="none" stroke="#2d6bbd" stroke-width="1.100"/></svg>
<svg class="b" style="left:461px;top:122px;" width="6" height="3" viewBox="0 0 6 3"><path d="M0 0h5.6L2.8 3z" fill="#444"/></svg>
<span class="t" style="left:475.0px;top:116.5px;font-size:12.2px;color:#666;transform:scaleX(1.0052);">Aa</span>
<svg class="b" style="left:495px;top:122px;" width="6" height="3" viewBox="0 0 6 3"><path d="M0 0h5.6L2.8 3z" fill="#444"/></svg>
<div class="b" style="left:509px;top:112px;width:1px;height:22px;background:#dadada;"></div>
<span class="t" style="left:517.0px;top:114.2px;font-size:8.5px;color:#555;transform:scaleX(0.9519);">ab</span>
<svg class="b" style="left:521px;top:114px;" width="14" height="14" viewBox="0 0 14 14"><path d="M10.500 .5l3 3-7 7-3.800.9.800-3.900z" fill="#555"/></svg>
<div class="b" style="left:516px;top:127px;width:17px;height:4px;background:#FFFF00;"></div>
<svg class="b" style="left:540px;top:122px;" width="6" height="3" viewBox="0 0 6 3"><path d="M0 0h5.6L2.8 3z" fill="#444"/></svg>
<span class="t" style="left:555.0px;top:112.4px;font-size:15px;color:#555;transform:scaleX(1.1993);">A</span>
<div class="b" style="left:553px;top:127px;width:16px;height:4px;background:#FF0000;"></div>
<svg class="b" style="left:576px;top:122px;" width="6" height="3" viewBox="0 0 6 3"><path d="M0 0h5.6L2.8 3z" fill="#444"/></svg>
<span class="t" style="left:432.6px;top:148.0px;font-size:11.6px;color:#444;transform:scaleX(0.8789);">Font</span>
<svg class="b" style="left:581px;top:151px;" width="8" height="8" viewBox="0 0 8 8"><path d="M.5 6V.5H6" fill="none" stroke="#777" stroke-width="1"/><path d="M3 3l4 4M7.500 3.800V7.500H3.800" fill="none" stroke="#777" stroke-width="1"/></svg>
<div class="b" style="left:593px;top:72px;width:1px;height:86px;background:#d4d4d4;"></div>
<div class="b" style="left:602px;top:78px;width:36px;height:24px;background:#c8c8c8;"></div>
<svg class="b" style="left:606px;top:82px;" width="17" height="15" viewBox="0 0 17 15"><g fill="#3f7fcb"><rect x="0" y="1" width="2.200" height="2.200"/><rect x="0" y="6.400" width="2.200" height="2.200"/><rect x="0" y="11.800" width="2.200" height="2.200"/></g><path d="M5 2.1H16.5M5 7.5H16.5M5 12.9H16.5" stroke="#666" stroke-width="1.1" fill="none"/></svg>
<svg class="b" style="left:628px;top:89px;" width="6" height="3" viewBox="0 0 6 3"><path d="M0 0h5.6L2.8 3z" fill="#333"/></svg>
<svg class="b" style="left:641px;top:81px;" width="17" height="17" viewBox="0 0 17 17"><g fill="#3f7fcb" font-size="5.500" font-weight="700" font-family="Liberation Sans"><text x="0" y="5">1</text><text x="0" y="11">2</text><text x="0" y="17">3</text></g><path d="M5.5 3.1H16.5M5.5 8.9H16.5M5.5 14.7H16.5" stroke="#666" stroke-width="1.1" fill="none"/></svg>
<svg class="b" style="left:664px;top:89px;" width="6" height="3" viewBox="0 0 6 3"><path d="M0 0h5.6L2.8 3z" fill="#444"/></svg>
<div class="b" style="left:677px;top:80px;width:1px;height:22px;background:#dadada;"></div>
<svg class="b" style="left:684px;top:83px;" width="17" height="15" viewBox="0 0 17 15"><path d="M0 0.6H16M8 3.9H16M8 7.2H16M8 10.5H16M0 13.8H16" stroke="#b5b5b5" stroke-width="1.1" fill="none"/><path d="M6.500 7.200H.8M3.500 4.200l-3 3 3 3" fill="none" stroke="#b5b5b5" stroke-width="1.800"/></svg>
<svg class="b" style="left:708px;top:83px;" width="17" height="15" viewBox="0 0 17 15"><path d="M0 0.6H16M8 3.9H16M8 7.2H16M8 10.5H16M0 13.8H16" stroke="#666" stroke-width="1.1" fill="none"/><path d="M0 7.200h5.700M3 4.200l3 3-3 3" fill="none" stroke="#3f7fcb" stroke-width="1.800"/></svg>
<div class="b" style="left:731px;top:80px;width:1px;height:22px;background:#dadada;"></div>
<svg class="b" style="left:738px;top:82px;" width="18" height="17" viewBox="0 0 18 17"><path d="M7 3H15.5M7 5.7H12.5M7 8.4H15.5M7 11.1H12.5M7 13.8H15.5" stroke="#777" stroke-width="1" fill="none"/><path d="M2.800 .8v5.700M.3 3.300L2.800 .8l2.500 2.500M2.800 15.800v-5.700M.3 13.300l2.500 2.500 2.500-2.500" fill="none" stroke="#3f7fcb" stroke-width="1.700"/></svg>
<svg class="b" style="left:759px;top:89px;" width="6" height="3" viewBox="0 0 6 3"><path d="M0 0h5.6L2.8 3z" fill="#444"/></svg>
<div class="b" style="left:602px;top:111px;width:23px;height:24px;background:#c8c8c8;"></div>
<svg class="b" style="left:607px;top:117px;" width="13" height="12" viewBox="0 0 13 12"><path d="M0 0.6H12M0 3.6H8M0 6.6H12M0 9.6H8" stroke="#666" stroke-width="1.1" fill="none"/></svg>
<svg class="b" style="left:630px;top:117px;" width="14" height="12" viewBox="0 0 14 12"><path d="M0 0.6H13M2.5 3.6H10.5M0 6.6H13M2.5 9.6H10.5" stroke="#666" stroke-width="1.1" fill="none"/></svg>
<svg class="b" style="left:654px;top:117px;" width="13" height="12" viewBox="0 0 13 12"><path d="M0 0.6H12M4 3.6H12M0 6.6H12M4 9.6H12" stroke="#666" stroke-width="1.1" fill="none"/></svg>
<svg class="b" style="left:676px;top:116px;" width="15" height="13" viewBox="0 0 15 13"><path d="M0 0.6H14M0 3.6H14M0 6.6H14M0 9.6H14M0 12.6H14" stroke="#666" stroke-width="1.1" fill="none"/></svg>
<div class="b" style="left:698px;top:112px;width:1px;height:22px;background:#dadada;"></div>
<svg class="b" style="left:706px;top:116px;" width="16" height="13" viewBox="0 0 16 13"><path d="M0.7 0.6H7M8.3 0.6H14.8M0.7 3.5H7M8.3 3.5H14.8M0.7 6.4H7M8.3 6.4H14.8M0.7 9.3H7M8.3 9.3H14.8M0.7 12.2H7M8.3 12.2H14.8" stroke="#5b93d6" stroke-width="1.3" fill="none"/></svg>
<svg class="b" style="left:727px;top:122px;" width="6" height="3" viewBox="0 0 6 3"><path d="M0 0h5.6L2.8 3z" fill="#444"/></svg>
<span class="t" style="left:726.0px;top:148.0px;font-size:11.6px;color:#444;transform:scaleX(0.8953);">Paragraph</span>
<svg class="b" style="left:773px;top:73px;" width="18" height="17" viewBox="0 0 18 17"><path d="M2.500 2v13.500M6.500 2v13.500M11.500 10v5.500M15.500 10v5.500" stroke="#666" stroke-width="1"/><path d="M1 13.800l1.500 2 1.500-2M5 13.800l1.500 2 1.500-2M10 13.800l1.500 2 1.500-2M14 13.800l1.500 2 1.500-2" fill="none" stroke="#666" stroke-width=".9"/><path d="M9.500 8.500l3-8h.8l3 8M10.600 5.800h5" fill="none" stroke="#2d6bbd" stroke-width="1.300"/></svg>
<span class="t" style="left:793.6px;top:76.5px;font-size:12.2px;color:#444;transform:scaleX(1.0284);">Text Direction</span>
<svg class="b" style="left:874px;top:81px;" width="6" height="3" viewBox="0 0 6 3"><path d="M0 0h5.6L2.8 3z" fill="#444"/></svg>
<svg class="b" style="left:773px;top:99px;" width="18" height="14" viewBox="0 0 18 14"><path d="M3.500 .6H.6v12.500H3.500M13.500 .6h2.900v12.500H13.500" fill="none" stroke="#777" stroke-width="1.100"/><path d="M3.500 5.200h10M3.500 6.900h10M3.500 8.600h10" stroke="#b0b0b0" stroke-width=".8"/><path d="M8.500 .5v4M6.500 2.500L8.500 .5l2 2M8.500 13.300v-4M6.500 11.300l2 2 2-2" fill="none" stroke="#2d6bbd" stroke-width="1.300"/></svg>
<span class="t" style="left:793.6px;top:100.5px;font-size:12.2px;color:#444;transform:scaleX(1.0328);">Align Text</span>
<svg class="b" style="left:852px;top:105px;" width="6" height="3" viewBox="0 0 6 3"><path d="M0 0h5.6L2.8 3z" fill="#444"/></svg>
<div class="b" style="left:770px;top:118px;width:149px;height:25px;background:#c8c8c8;"></div>
<svg class="b" style="left:773px;top:122px;" width="18" height="16" viewBox="0 0 18 16"><path d="M.5 2.500h10.500l2 3H13v3.500H.8L3.500 5.800z" fill="#5aab8b"/><rect x="6.500" y="6.200" width="10" height="8.300" fill="#fff" stroke="#777"/><path d="M8.500 9.500h6M8.500 11.800h6" stroke="#aaa" stroke-width="1"/></svg>
<span class="t" style="left:793.6px;top:124.5px;font-size:12.2px;color:#222;transform:scaleX(1.0148);">Convert to SmartArt</span>
<svg class="b" style="left:907px;top:129px;" width="6" height="3" viewBox="0 0 6 3"><path d="M0 0h5.6L2.8 3z" fill="#222"/></svg>
<div class="b" style="left:927px;top:72px;width:1px;height:86px;background:#d4d4d4;"></div>
<div class="b" style="left:937px;top:73px;width:137px;height:65px;background:#fff;border:1px solid #cfcfcf;box-sizing:border-box;"></div>
<div class="b" style="left:1058px;top:73px;width:16px;height:23px;background:#e1e1e1;border:1px solid #cfcfcf;box-sizing:border-box;"></div>
<div class="b" style="left:1058px;top:95px;width:16px;height:22px;background:#fff;border:1px solid #cfcfcf;box-sizing:border-box;"></div>
<div class="b" style="left:1058px;top:116px;width:16px;height:22px;background:#fff;border:1px solid #cfcfcf;box-sizing:border-box;"></div>
<svg class="b" style="left:1063px;top:83px;" width="6" height="3" viewBox="0 0 6 3"><path d="M0 3L3 0L6 3z" fill="#b5b5b5"/></svg>
<svg class="b" style="left:1063px;top:104px;" width="6" height="3" viewBox="0 0 6 3"><path d="M0 0L3 3L6 0z" fill="#555"/></svg>
<svg class="b" style="left:1063px;top:122px;" width="6" height="7" viewBox="0 0 6 7"><path d="M0 .5h6" stroke="#555" stroke-width="1"/><path d="M0 3L3 6L6 3z" fill="#555"/></svg>
<svg class="b" style="left:938px;top:76px;" width="18" height="18" viewBox="0 0 18 18"><rect x="1.500" y="3.500" width="15" height="11.500" fill="none" stroke="#555" stroke-width="1"/><text x="3" y="9.500" font-size="6.500" font-weight="700" fill="#2d6bbd" font-family="Liberation Sans">A</text><path d="M8.500 6.500h6M8.500 8.500h6M3.500 11h11M3.500 13h11" stroke="#777" stroke-width=".8"/></svg>
<svg class="b" style="left:958px;top:76px;" width="18" height="18" viewBox="0 0 18 18"><path d="M2 2.500L15.500 16" fill="none" stroke="#555" stroke-width="1"/></svg>
<svg class="b" style="left:979px;top:76px;" width="18" height="18" viewBox="0 0 18 18"><path d="M2 2.500L15 15.500M15.500 11v5h-5" fill="none" stroke="#555" stroke-width="1"/></svg>
<svg class="b" style="left:998px;top:76px;" width="18" height="18" viewBox="0 0 18 18"><rect x="2" y="4" width="14.500" height="11" fill="none" stroke="#555" stroke-width="1"/></svg>
<svg class="b" style="left:1018px;top:76px;" width="18" height="18" viewBox="0 0 18 18"><ellipse cx="9.300" cy="9.500" rx="7.300" ry="6" fill="none" stroke="#555" stroke-width="1"/></svg>
<svg class="b" style="left:1038px;top:76px;" width="18" height="18" viewBox="0 0 18 18"><rect x="2" y="4" width="14.500" height="11" rx="2.800" fill="none" stroke="#555" stroke-width="1"/></svg>
<svg class="b" style="left:938px;top:97px;" width="18" height="18" viewBox="0 0 18 18"><path d="M9 3l6.500 12.500h-13z" fill="none" stroke="#555" stroke-width="1"/></svg>
<svg class="b" style="left:958px;top:97px;" width="18" height="18" viewBox="0 0 18 18"><path d="M2.500 4.500h6v10h6.500" fill="none" stroke="#555" stroke-width="1"/></svg>
<svg class="b" style="left:979px;top:97px;" width="18" height="18" viewBox="0 0 18 18"><path d="M2 4.500h6v9.500h7M13 11.500l2.500 2.500-2.500 2.500" fill="none" stroke="#555" stroke-width="1"/></svg>
<svg class="b" style="left:998px;top:97px;" width="18" height="18" viewBox="0 0 18 18"><path d="M2 7h7.500V3.500L16 9l-6.500 5.500V11H2z" fill="none" stroke="#555" stroke-width="1"/></svg>
<svg class="b" style="left:1018px;top:97px;" width="18" height="18" viewBox="0 0 18 18"><path d="M6.500 2.500h5.500v7h3.500L9.200 16 3 9.500h3.500z" fill="none" stroke="#555" stroke-width="1"/></svg>
<svg class="b" style="left:1038px;top:97px;" width="18" height="18" viewBox="0 0 18 18"><path d="M2.500 6.500L5.500 3H12c-1.500 3 0 6 4.500 6V15.500H2.500z" fill="none" stroke="#555" stroke-width="1"/></svg>
<svg class="b" style="left:938px;top:116px;" width="18" height="18" viewBox="0 0 18 18"><path d="M7 1.500c1 2.500-3.500 4-3 6 .5 2 4-1.500 6 .5 2.500 2.500-3.500 4.500-3 6.500.5 1.800 3.500.5 3-1.500-.5-1.800-3-1-3.500.5-.3 1 .5 2.500 2 3.500" fill="none" stroke="#555" stroke-width="1"/></svg>
<svg class="b" style="left:958px;top:116px;" width="18" height="18" viewBox="0 0 18 18"><path d="M2 3.500c7 0 12.500 4 13 13" fill="none" stroke="#555" stroke-width="1"/></svg>
<svg class="b" style="left:979px;top:116px;" width="18" height="18" viewBox="0 0 18 18"><path d="M1.500 12.500C4 12.500 5 4 7.500 4c3 0 3 11.500 6.500 11.500h2" fill="none" stroke="#555" stroke-width="1"/></svg>
<svg class="b" style="left:998px;top:116px;" width="18" height="18" viewBox="0 0 18 18"><path d="M11 2c-2.500 0-2.500 1-2.500 3.500S8.500 9 6.500 9c2 0 2 1 2 3.500s0 3.500 2.500 3.500" fill="none" stroke="#555" stroke-width="1"/></svg>
<svg class="b" style="left:1018px;top:116px;" width="18" height="18" viewBox="0 0 18 18"><path d="M7 2c2.500 0 2.500 1 2.500 3.500S9.500 9 11.500 9c-2 0-2 1-2 3.500s0 3.500-2.500 3.500" fill="none" stroke="#555" stroke-width="1"/></svg>
<svg class="b" style="left:1038px;top:116px;" width="18" height="18" viewBox="0 0 18 18"><path d="M9 2.500l2 4.800 5 .400-3.800 3.300 1.200 5L9 13.300 4.600 16l1.200-5L2 7.700l5-.400z" fill="none" stroke="#555" stroke-width="1"/></svg>
<svg class="b" style="left:1086px;top:75px;" width="31" height="30" viewBox="0 0 31 30"><rect x="14.400" y="6" width="9.600" height="9.700" fill="#EDBE63"/><rect x="7" y="13.600" width="10.200" height="9" fill="#EFC878"/><rect x="1.200" y="1.100" width="12.500" height="12" fill="#fff" stroke="#8f8f8f"/><rect x="17" y="16.600" width="12.500" height="12" fill="#fff" stroke="#8f8f8f"/></svg>
<span class="t" style="left:1079.6px;top:111.9px;font-size:12.2px;color:#444;transform:scaleX(0.9999);">Arrange</span>
<svg class="b" style="left:1099px;top:133px;" width="6" height="3" viewBox="0 0 6 3"><path d="M0 0h5.6L2.8 3z" fill="#444"/></svg>
<svg class="b" style="left:1132px;top:75px;" width="35" height="34" viewBox="0 0 35 34"><rect x="2" y="1.800" width="26.500" height="26" rx="6.500" fill="#fff" stroke="#a0a0a0" stroke-width="1.200"/><path d="M31.800 9l2.600 2.200-7.600 10-3.600-2.800z" fill="#7a7a7a"/><path d="M23 18.600l3.600 2.800c-1.800 5-7.500 8.400-16 9.600 3.800-2.300 5.600-4.800 6.600-7.400 1.200-3 3.400-5.200 5.800-5z" fill="#3f7fcb"/><path d="M18.500 26c1.600-2.200 3.800-3.300 5.800-2.600" fill="none" stroke="#fff" stroke-width="1.100"/></svg>
<span class="t" style="left:1132.6px;top:111.9px;font-size:12.2px;color:#444;transform:scaleX(0.9941);">Quick</span>
<span class="t" style="left:1127.6px;top:127.7px;font-size:12.2px;color:#444;transform:scaleX(0.8699);">Styles</span>
<svg class="b" style="left:1163px;top:133px;" width="6" height="3" viewBox="0 0 6 3"><path d="M0 0h5.6L2.8 3z" fill="#444"/></svg>
<svg class="b" style="left:1173px;top:73px;" width="18" height="17" viewBox="0 0 18 17"><path d="M6.800 3.800l7 5-4.800 4.200-6.200-4.400z" fill="#fff" stroke="#666" stroke-width="1.100"/><path d="M7.300 4.200V2c0-1.600 2.500-1.600 2.500 0v3.600" fill="none" stroke="#666" stroke-width="1"/><path d="M13.500 5.500c2 .5 3 2.200 2.800 5.200-1-.8-1.800-2-2.400-3.200z" fill="#3f7fcb"/><rect x="0" y="13.600" width="17" height="3.200" fill="#F0C14B"/></svg>
<span class="t" style="left:1193.4px;top:76.5px;font-size:12.2px;color:#444;transform:scaleX(0.9695);">Shape Fill</span>
<svg class="b" style="left:1250px;top:81px;" width="6" height="3" viewBox="0 0 6 3"><path d="M0 0h5.6L2.8 3z" fill="#444"/></svg>
<svg class="b" style="left:1173px;top:97px;" width="18" height="17" viewBox="0 0 18 17"><path d="M9.500 2.300H.8v9.600h10.400V8" fill="none" stroke="#777" stroke-width="1.100"/><path d="M14.600 .8l2.200 1.800-8.600 9.600-2.800.9.600-2.900z" fill="#3f7fcb"/><rect x="0" y="13.400" width="17" height="3.200" fill="#F58220"/></svg>
<span class="t" style="left:1193.4px;top:100.5px;font-size:12.2px;color:#444;transform:scaleX(0.9906);">Shape Outline</span>
<svg class="b" style="left:1274px;top:105px;" width="6" height="3" viewBox="0 0 6 3"><path d="M0 0h5.6L2.8 3z" fill="#444"/></svg>
<svg class="b" style="left:1173px;top:122px;" width="18" height="16" viewBox="0 0 18 16"><path d="M1.200 11.500c0 2 1 3.300 2.800 3.300h7.500c1.500 0 2.500-.8 3-2.300l2-6.500c.3-1 .3-2-.2-2.800L13 11.500z" fill="#6a6a6a"/><path d="M5.500 1.700h8.800c1.500 0 2.200 1 1.700 2.400l-2 6c-.4 1.300-1.300 2-2.600 2H3c-1.500 0-2.200-1-1.700-2.400l2-6c.4-1.300 1.100-2 2.200-2z" fill="#fff" stroke="#8a8a8a" stroke-width="1"/></svg>
<span class="t" style="left:1193.4px;top:124.5px;font-size:12.2px;color:#444;transform:scaleX(0.9784);">Shape Effects</span>
<svg class="b" style="left:1271px;top:129px;" width="6" height="3" viewBox="0 0 6 3"><path d="M0 0h5.6L2.8 3z" fill="#444"/></svg>
<svg class="b" style="left:1280px;top:151px;" width="8" height="8" viewBox="0 0 8 8"><path d="M.5 6V.5H6" fill="none" stroke="#777" stroke-width="1"/><path d="M3 3l4 4M7.500 3.800V7.500H3.800" fill="none" stroke="#777" stroke-width="1"/></svg>
<div class="b" style="left:1292px;top:72px;width:1px;height:86px;background:#d4d4d4;"></div>
<svg class="b" style="left:1304px;top:74px;" width="17" height="16" viewBox="0 0 17 16"><circle cx="10.500" cy="6" r="4.800" fill="none" stroke="#2d6bbd" stroke-width="1.600"/><path d="M7 9.500L1.200 15.200" stroke="#2d6bbd" stroke-width="2"/></svg>
<span class="t" style="left:1324.0px;top:76.5px;font-size:12.2px;color:#444;transform:scaleX(0.9691);">Find</span>
<svg class="b" style="left:1303px;top:98px;" width="19" height="17" viewBox="0 0 19 17"><text x="1" y="6.500" font-size="8" font-weight="700" fill="#7e4aa8" font-family="Liberation Sans">ab</text><text x="9" y="15.500" font-size="8" font-weight="700" fill="#555" font-family="Liberation Sans">ac</text><path d="M1.500 8v3.500h5M4.500 9.500l2 2-2 2" fill="none" stroke="#2d6bbd" stroke-width="1.200"/></svg>
<span class="t" style="left:1324.0px;top:100.5px;font-size:12.2px;color:#444;transform:scaleX(0.9830);">Replace</span>
<svg class="b" style="left:1379px;top:105px;" width="6" height="3" viewBox="0 0 6 3"><path d="M0 0h5.6L2.8 3z" fill="#444"/></svg>
<svg class="b" style="left:1307px;top:121px;" width="12" height="18" viewBox="0 0 12 18"><path d="M1.500 1.500v12.500l3.200-3 2.300 5.500 2-.9-2.400-5.300h4.200z" fill="#fff" stroke="#555" stroke-width="1"/></svg>
<span class="t" style="left:1324.0px;top:124.5px;font-size:12.2px;color:#444;transform:scaleX(0.9732);">Select</span>
<svg class="b" style="left:1361px;top:129px;" width="6" height="3" viewBox="0 0 6 3"><path d="M0 0h5.6L2.8 3z" fill="#444"/></svg>
<span class="t" style="left:1327.6px;top:148.0px;font-size:11.6px;color:#444;transform:scaleX(0.9247);">Editing</span>
<div class="b" style="left:1397px;top:72px;width:1px;height:86px;background:#d4d4d4;"></div>
<svg class="b" style="left:1580px;top:152px;" width="12" height="7" viewBox="0 0 12 7"><path d="M.7 6.300L6 1l5.300 5.300" fill="none" stroke="#666" stroke-width="1.100"/></svg>
</div>
<div id="statusbar">
<span class="t" style="left:8.0px;top:842.6px;font-size:11.2px;color:#444;transform:scaleX(0.9815);">Slide 2 of 4</span>
<svg class="b" style="left:83px;top:840px;" width="16" height="14" viewBox="0 0 16 14"><path d="M.6 1.500h5.200c1.200 0 1.800.600 1.800 1.500v9.500c-.3-.800-.9-1.200-1.800-1.200H.6z" fill="none" stroke="#666" stroke-width="1"/><path d="M7.600 3c0-.9.600-1.500 1.800-1.500h2" fill="none" stroke="#666" stroke-width="1"/><path d="M7.600 12.500c.3-.800.900-1.200 1.800-1.200h5.200V8" fill="none" stroke="#666" stroke-width="1"/><path d="M9.500 5l2 2.500 3.800-5.500" fill="none" stroke="#666" stroke-width="1.100"/></svg>
<span class="t" style="left:116.0px;top:842.6px;font-size:11.2px;color:#444;transform:scaleX(0.9429);">English (United States)</span>
<svg class="b" style="left:1073px;top:842px;" width="13" height="11" viewBox="0 0 13 11"><path d="M6.500 0l3.500 3.500h-7z" fill="#666"/><path d="M1.500 5.500h10M0 8h13M0 10.500h8" stroke="#666" stroke-width="1"/></svg>
<span class="t" style="left:1090.7px;top:842.6px;font-size:11.2px;color:#444;transform:scaleX(0.9570);">Notes</span>
<svg class="b" style="left:1140px;top:841px;" width="16" height="13" viewBox="0 0 16 13"><path d="M1 0h14a1 1 0 0 1 1 1v8a1 1 0 0 1-1 1H7l-3 3v-3H1a1 1 0 0 1-1-1V1a1 1 0 0 1 1-1z" fill="#555"/></svg>
<span class="t" style="left:1158.0px;top:842.6px;font-size:11.2px;color:#444;transform:scaleX(0.9419);">Comments</span>
<div class="b" style="left:1229px;top:836px;width:42px;height:22px;background:#c6c6c6;"></div>
<svg class="b" style="left:1243px;top:840px;" width="15" height="14" viewBox="0 0 15 14"><rect x=".5" y=".5" width="14" height="13" fill="none" stroke="#666" stroke-width="1"/><path d="M4.500 .5v13M4.500 9.500h10" fill="none" stroke="#666" stroke-width="1"/><rect x="6.500" y="2.500" width="6" height="5" fill="none" stroke="#666" stroke-width="1"/></svg>
<svg class="b" style="left:1284px;top:840px;" width="15" height="14" viewBox="0 0 15 14"><rect x=".5" y=".5" width="5.500" height="5" fill="none" stroke="#666" stroke-width="1"/><rect x="8.500" y=".5" width="5.500" height="5" fill="none" stroke="#666" stroke-width="1"/><rect x=".5" y="8.500" width="5.500" height="5" fill="none" stroke="#666" stroke-width="1"/><rect x="8.500" y="8.500" width="5.500" height="5" fill="none" stroke="#666" stroke-width="1"/></svg>
<svg class="b" style="left:1326px;top:840px;" width="15" height="14" viewBox="0 0 15 14"><path d="M7.500 2c-1.500-1.200-4-1.500-7-1.500v11c3 0 5.500.300 7 1.500 1.500-1.200 4-1.500 7-1.500V.5c-3 0-5.500.300-7 1.500zM7.500 2v11" fill="none" stroke="#666" stroke-width="1"/><path d="M2.500 3.500h3M2.500 6h3M2.500 8.500h3M9.500 3.500h3M9.500 6h3M9.500 8.500h3" stroke="#666" stroke-width=".9"/></svg>
<svg class="b" style="left:1367px;top:840px;" width="15" height="14" viewBox="0 0 15 14"><path d="M0 .600h15M1.500 1v6.500h12V1" fill="none" stroke="#666" stroke-width="1"/><path d="M7.500 7.500v4M4 13h7" fill="none" stroke="#666" stroke-width="1"/><path d="M4.500 3.500h6" stroke="#666" stroke-width="1"/></svg>
<div class="b" style="left:1402px;top:846px;width:8px;height:1px;background:#666;"></div>
<div class="b" style="left:1415px;top:846px;width:104px;height:1px;background:#8a8a8a;"></div>
<div class="b" style="left:1467px;top:843px;width:1px;height:7px;background:#8a8a8a;"></div>
<div class="b" style="left:1457px;top:841px;width:5px;height:12px;background:#555;"></div>
<svg class="b" style="left:1524px;top:842px;" width="9" height="9" viewBox="0 0 9 9"><path d="M0 4.500h9M4.500 0v9" stroke="#666" stroke-width="1.200"/></svg>
<span class="t" style="left:1545.8px;top:842.6px;font-size:11.2px;color:#444;transform:scaleX(0.9011);">86%</span>
<svg class="b" style="left:1582px;top:841px;" width="12" height="12" viewBox="0 0 12 12"><rect x=".5" y=".5" width="11" height="11" fill="none" stroke="#8a8a8a"/><path d="M2.500 5V2.500H5M7 2.500h2.500V5M9.500 7v2.500H7M5 9.500H2.500V7" fill="none" stroke="#8a8a8a" stroke-width="1.300"/><rect x="5" y="5" width="2" height="2" fill="#8a8a8a"/></svg>
</div>
<div id="smartart-menu">
<div class="b" style="left:770px;top:143px;width:412px;height:289px;background:#fff;border:1px solid #c6c6c6;box-sizing:border-box;box-shadow:1px 2px 4px rgba(0,0,0,.28)"></div>
<svg class="b" style="left:770px;top:143px" width="412" height="289" viewBox="0 0 412 289"><rect x="18.3" y="21.3" width="57.1" height="9.5" rx="2" fill="#d6d6d6" stroke="#8c8c8c" stroke-width="1"/><path d="M22.5 25.6H29.7" stroke="#8c8c8c" stroke-width="1"/><circle cx="22.8" cy="33.9" r="1.1" fill="#c4c4c4" stroke="#8c8c8c" stroke-width="0.7"/><path d="M25.8 33.9H32.3" stroke="#9a9a9a" stroke-width="0.9"/><rect x="18.3" y="40.8" width="57.1" height="9.8" rx="2" fill="#d6d6d6" stroke="#8c8c8c" stroke-width="1"/><path d="M22.5 45.4H29.7" stroke="#8c8c8c" stroke-width="1"/><circle cx="22.8" cy="53.6" r="1.1" fill="#c4c4c4" stroke="#8c8c8c" stroke-width="0.7"/><path d="M25.8 53.6H32.3" stroke="#9a9a9a" stroke-width="0.9"/><rect x="113.0" y="17.3" width="38.6" height="11.3" rx="1.5" fill="#fff" stroke="#8c8c8c" stroke-width="1"/><rect x="93.4" y="15.8" width="20.2" height="13.6" rx="1.5" fill="#d6d6d6" stroke="#8c8c8c" stroke-width="1"/><path d="M99.8 23.3H106.8" stroke="#8c8c8c" stroke-width="1"/><circle cx="117.5" cy="20.2" r="1.1" fill="#c4c4c4" stroke="#8c8c8c" stroke-width="0.7"/><path d="M120.5 20.2H127.0" stroke="#9a9a9a" stroke-width="0.9"/><circle cx="117.5" cy="24.5" r="1.1" fill="#c4c4c4" stroke="#8c8c8c" stroke-width="0.7"/><path d="M120.5 24.5H127.0" stroke="#9a9a9a" stroke-width="0.9"/><rect x="113.0" y="33.0" width="38.6" height="11.3" rx="1.5" fill="#fff" stroke="#8c8c8c" stroke-width="1"/><rect x="93.4" y="31.5" width="20.2" height="13.6" rx="1.5" fill="#d6d6d6" stroke="#8c8c8c" stroke-width="1"/><path d="M99.8 39.0H106.8" stroke="#8c8c8c" stroke-width="1"/><circle cx="117.5" cy="35.9" r="1.1" fill="#c4c4c4" stroke="#8c8c8c" stroke-width="0.7"/><path d="M120.5 35.9H127.0" stroke="#9a9a9a" stroke-width="0.9"/><circle cx="117.5" cy="40.2" r="1.1" fill="#c4c4c4" stroke="#8c8c8c" stroke-width="0.7"/><path d="M120.5 40.2H127.0" stroke="#9a9a9a" stroke-width="0.9"/><rect x="113.0" y="48.8" width="38.6" height="11.3" rx="1.5" fill="#fff" stroke="#8c8c8c" stroke-width="1"/><rect x="93.4" y="47.3" width="20.2" height="13.6" rx="1.5" fill="#d6d6d6" stroke="#8c8c8c" stroke-width="1"/><path d="M99.8 54.8H106.8" stroke="#8c8c8c" stroke-width="1"/><circle cx="117.5" cy="51.7" r="1.1" fill="#c4c4c4" stroke="#8c8c8c" stroke-width="0.7"/><path d="M120.5 51.7H127.0" stroke="#9a9a9a" stroke-width="0.9"/><circle cx="117.5" cy="56.0" r="1.1" fill="#c4c4c4" stroke="#8c8c8c" stroke-width="0.7"/><path d="M120.5 56.0H127.0" stroke="#9a9a9a" stroke-width="0.9"/><rect x="186.0" y="14.7" width="34.2" height="13.1" rx="1" fill="#d6d6d6" stroke="#8c8c8c" stroke-width="1"/><path d="M199.7 21.3H207.9" stroke="#8c8c8c" stroke-width="1"/><circle cx="181.2" cy="21.3" r="6.2" fill="#fff" stroke="#8c8c8c" stroke-width="1"/><rect x="186.0" y="31.4" width="34.2" height="13.1" rx="1" fill="#d6d6d6" stroke="#8c8c8c" stroke-width="1"/><path d="M199.7 38.0H207.9" stroke="#8c8c8c" stroke-width="1"/><circle cx="181.2" cy="38.0" r="6.2" fill="#fff" stroke="#8c8c8c" stroke-width="1"/><rect x="186.0" y="48.2" width="34.2" height="13.1" rx="1" fill="#d6d6d6" stroke="#8c8c8c" stroke-width="1"/><path d="M199.7 54.8H207.9" stroke="#8c8c8c" stroke-width="1"/><circle cx="181.2" cy="54.8" r="6.2" fill="#fff" stroke="#8c8c8c" stroke-width="1"/><path d="M261.6 21A18 18 0 0 0 261.6 57z" fill="#d6d6d6" stroke="#8c8c8c" stroke-width="1" /><path d="M261.6 31.5A12.700 12.700 0 0 0 261.6 57" fill="none" stroke="#8c8c8c" stroke-width="1" /><path d="M261.6 42.5A7.200 7.200 0 0 0 261.6 57" fill="none" stroke="#8c8c8c" stroke-width="1" /><rect x="261.6" y="21.2" width="39.9" height="35.8" rx="0" fill="#fff" stroke="#8c8c8c" stroke-width="1"/><path d="M261.6 31.3H301.5" fill="none" stroke="#8c8c8c" stroke-width="1" /><path d="M265.0 26.2H272.5" stroke="#8c8c8c" stroke-width="1"/><circle cx="284.3" cy="24.1" r="1.1" fill="#c4c4c4" stroke="#8c8c8c" stroke-width="0.7"/><path d="M287.3 24.1H293.6" stroke="#9a9a9a" stroke-width="0.9"/><circle cx="284.3" cy="28.4" r="1.1" fill="#c4c4c4" stroke="#8c8c8c" stroke-width="0.7"/><path d="M287.3 28.4H293.6" stroke="#9a9a9a" stroke-width="0.9"/><path d="M261.6 42.2H301.5" fill="none" stroke="#8c8c8c" stroke-width="1" /><path d="M265.0 36.8H272.5" stroke="#8c8c8c" stroke-width="1"/><circle cx="284.3" cy="34.6" r="1.1" fill="#c4c4c4" stroke="#8c8c8c" stroke-width="0.7"/><path d="M287.3 34.6H293.6" stroke="#9a9a9a" stroke-width="0.9"/><circle cx="284.3" cy="38.9" r="1.1" fill="#c4c4c4" stroke="#8c8c8c" stroke-width="0.7"/><path d="M287.3 38.9H293.6" stroke="#9a9a9a" stroke-width="0.9"/><path d="M261.6 52.6H301.5" fill="none" stroke="#8c8c8c" stroke-width="1" /><path d="M265.0 47.4H272.5" stroke="#8c8c8c" stroke-width="1"/><circle cx="284.3" cy="45.3" r="1.1" fill="#c4c4c4" stroke="#8c8c8c" stroke-width="0.7"/><path d="M287.3 45.3H293.6" stroke="#9a9a9a" stroke-width="0.9"/><circle cx="284.3" cy="49.5" r="1.1" fill="#c4c4c4" stroke="#8c8c8c" stroke-width="0.7"/><path d="M287.3 49.5H293.6" stroke="#9a9a9a" stroke-width="0.9"/><path d="M261.6 54.800H301.5" fill="none" stroke="#8c8c8c" stroke-width="1" /><rect x="318.3" y="26.3" width="18.5" height="24.4" rx="0.8" fill="#fff" stroke="#8c8c8c" stroke-width="1"/><rect x="318.3" y="26.3" width="18.5" height="8.5" rx="0.8" fill="#d6d6d6" stroke="#8c8c8c" stroke-width="1"/><path d="M324.3 30.7H330.8" stroke="#8c8c8c" stroke-width="1"/><circle cx="322.8" cy="39.3" r="1.1" fill="#c4c4c4" stroke="#8c8c8c" stroke-width="0.7"/><path d="M325.8 39.3H330.8" stroke="#9a9a9a" stroke-width="0.9"/><circle cx="322.8" cy="44.4" r="1.1" fill="#c4c4c4" stroke="#8c8c8c" stroke-width="0.7"/><path d="M325.8 44.4H330.8" stroke="#9a9a9a" stroke-width="0.9"/><rect x="338.3" y="26.3" width="18.5" height="24.4" rx="0.8" fill="#fff" stroke="#8c8c8c" stroke-width="1"/><rect x="338.3" y="26.3" width="18.5" height="8.5" rx="0.8" fill="#d6d6d6" stroke="#8c8c8c" stroke-width="1"/><path d="M344.3 30.7H350.8" stroke="#8c8c8c" stroke-width="1"/><circle cx="342.8" cy="39.3" r="1.1" fill="#c4c4c4" stroke="#8c8c8c" stroke-width="0.7"/><path d="M345.8 39.3H350.8" stroke="#9a9a9a" stroke-width="0.9"/><circle cx="342.8" cy="44.4" r="1.1" fill="#c4c4c4" stroke="#8c8c8c" stroke-width="0.7"/><path d="M345.8 44.4H350.8" stroke="#9a9a9a" stroke-width="0.9"/><rect x="358.1" y="26.3" width="18.5" height="24.4" rx="0.8" fill="#fff" stroke="#8c8c8c" stroke-width="1"/><rect x="358.1" y="26.3" width="18.5" height="8.5" rx="0.8" fill="#d6d6d6" stroke="#8c8c8c" stroke-width="1"/><path d="M364.1 30.7H370.6" stroke="#8c8c8c" stroke-width="1"/><circle cx="362.6" cy="39.3" r="1.1" fill="#c4c4c4" stroke="#8c8c8c" stroke-width="0.7"/><path d="M365.6 39.3H370.6" stroke="#9a9a9a" stroke-width="0.9"/><circle cx="362.6" cy="44.4" r="1.1" fill="#c4c4c4" stroke="#8c8c8c" stroke-width="0.7"/><path d="M365.6 44.4H370.6" stroke="#9a9a9a" stroke-width="0.9"/><path d="M47 87V106M26 106.3V103.6H68V106.3M39.800 95.200H47" fill="none" stroke="#8c8c8c" stroke-width="1" /><rect x="38.3" y="78.4" width="17.5" height="8.7" rx="0.8" fill="#d6d6d6" stroke="#8c8c8c" stroke-width="1"/><path d="M44.5 82.8H49.5" stroke="#8c8c8c" stroke-width="1"/><rect x="22.5" y="90.8" width="17.3" height="8.7" rx="0.8" fill="#d6d6d6" stroke="#8c8c8c" stroke-width="1"/><path d="M28.5 95.2H33.5" stroke="#8c8c8c" stroke-width="1"/><rect x="17.3" y="106.3" width="17.5" height="9.0" rx="0.8" fill="#d6d6d6" stroke="#8c8c8c" stroke-width="1"/><path d="M23.5 110.9H28.6" stroke="#8c8c8c" stroke-width="1"/><rect x="38.3" y="106.3" width="17.5" height="9.0" rx="0.8" fill="#d6d6d6" stroke="#8c8c8c" stroke-width="1"/><path d="M44.5 110.9H49.6" stroke="#8c8c8c" stroke-width="1"/><rect x="59.3" y="106.3" width="17.5" height="9.0" rx="0.8" fill="#d6d6d6" stroke="#8c8c8c" stroke-width="1"/><path d="M65.5 110.9H70.6" stroke="#8c8c8c" stroke-width="1"/><path d="M94.9 87V112H97.9M94.9 96.300H97.9" fill="none" stroke="#8c8c8c" stroke-width="1" /><rect x="93.4" y="74.0" width="26.0" height="13.1" rx="1.2" fill="#d6d6d6" stroke="#8c8c8c" stroke-width="1"/><path d="M103.4 80.6H109.4" stroke="#8c8c8c" stroke-width="1"/><rect x="97.9" y="89.8" width="21.5" height="13.0" rx="1.2" fill="#fff" stroke="#8c8c8c" stroke-width="1"/><path d="M105.9 96.3H111.4" stroke="#8c8c8c" stroke-width="1"/><rect x="97.9" y="105.4" width="21.5" height="13.2" rx="1.2" fill="#fff" stroke="#8c8c8c" stroke-width="1"/><path d="M105.9 112.0H111.4" stroke="#8c8c8c" stroke-width="1"/><path d="M126.4 87V112H129.4M126.4 96.300H129.4" fill="none" stroke="#8c8c8c" stroke-width="1" /><rect x="124.9" y="74.0" width="26.0" height="13.1" rx="1.2" fill="#d6d6d6" stroke="#8c8c8c" stroke-width="1"/><path d="M134.9 80.6H140.9" stroke="#8c8c8c" stroke-width="1"/><rect x="129.4" y="89.8" width="21.5" height="13.0" rx="1.2" fill="#fff" stroke="#8c8c8c" stroke-width="1"/><path d="M137.4 96.3H142.9" stroke="#8c8c8c" stroke-width="1"/><rect x="129.4" y="105.4" width="21.5" height="13.2" rx="1.2" fill="#fff" stroke="#8c8c8c" stroke-width="1"/><path d="M137.4 112.0H142.9" stroke="#8c8c8c" stroke-width="1"/><rect x="168.4" y="74.0" width="18.3" height="44.6" rx="2" fill="#d6d6d6" stroke="#8c8c8c" stroke-width="1"/><circle cx="177.6" cy="86.6" r="6.6" fill="#fff" stroke="#8c8c8c" stroke-width="1"/><path d="M173.4 101.6H181.8" stroke="#8c8c8c" stroke-width="1"/><rect x="188.4" y="74.0" width="18.3" height="44.6" rx="2" fill="#d6d6d6" stroke="#8c8c8c" stroke-width="1"/><circle cx="197.6" cy="86.6" r="6.6" fill="#fff" stroke="#8c8c8c" stroke-width="1"/><path d="M193.4 101.6H201.8" stroke="#8c8c8c" stroke-width="1"/><rect x="208.2" y="74.0" width="18.3" height="44.6" rx="2" fill="#d6d6d6" stroke="#8c8c8c" stroke-width="1"/><circle cx="217.4" cy="86.6" r="6.6" fill="#fff" stroke="#8c8c8c" stroke-width="1"/><path d="M213.2 101.6H221.6" stroke="#8c8c8c" stroke-width="1"/><path d="M171.100 111.100L177 105.800V108.800H217.800V105.800L223.700 111.100L217.800 116.400V113.400H177V116.400z" fill="#fff" stroke="#8c8c8c" stroke-width="1" /><path d="M256.8 95.6L274 80.6M256.8 95.6H279.3M256.8 95.6L274 111.8" fill="none" stroke="#8c8c8c" stroke-width="1" /><circle cx="256.8" cy="95.6" r="10.0" fill="#d6d6d6" stroke="#8c8c8c" stroke-width="1"/><circle cx="274.0" cy="80.6" r="6.4" fill="#d6d6d6" stroke="#8c8c8c" stroke-width="1"/><path d="M271.2 80.6H276.8" stroke="#8c8c8c" stroke-width="1"/><circle cx="284.4" cy="78.5" r="1.1" fill="#c4c4c4" stroke="#8c8c8c" stroke-width="0.7"/><path d="M287.4 78.5H292.2" stroke="#9a9a9a" stroke-width="0.9"/><circle cx="284.4" cy="82.7" r="1.1" fill="#c4c4c4" stroke="#8c8c8c" stroke-width="0.7"/><path d="M287.4 82.7H292.2" stroke="#9a9a9a" stroke-width="0.9"/><circle cx="279.3" cy="96.1" r="6.4" fill="#d6d6d6" stroke="#8c8c8c" stroke-width="1"/><path d="M276.5 96.1H282.1" stroke="#8c8c8c" stroke-width="1"/><circle cx="289.7" cy="94.0" r="1.1" fill="#c4c4c4" stroke="#8c8c8c" stroke-width="0.7"/><path d="M292.7 94.0H297.5" stroke="#9a9a9a" stroke-width="0.9"/><circle cx="289.7" cy="98.2" r="1.1" fill="#c4c4c4" stroke="#8c8c8c" stroke-width="0.7"/><path d="M292.7 98.2H297.5" stroke="#9a9a9a" stroke-width="0.9"/><circle cx="274.0" cy="111.8" r="6.4" fill="#d6d6d6" stroke="#8c8c8c" stroke-width="1"/><path d="M271.2 111.8H276.8" stroke="#8c8c8c" stroke-width="1"/><circle cx="284.4" cy="109.7" r="1.1" fill="#c4c4c4" stroke="#8c8c8c" stroke-width="0.7"/><path d="M287.4 109.7H292.2" stroke="#9a9a9a" stroke-width="0.9"/><circle cx="284.4" cy="113.9" r="1.1" fill="#c4c4c4" stroke="#8c8c8c" stroke-width="0.7"/><path d="M287.4 113.9H292.2" stroke="#9a9a9a" stroke-width="0.9"/><path d="M-2.600 -1h2.400v-1.800L3 0L-.2 2.800V1H-2.600z" fill="#8a8a8a" transform="translate(355.3 85.8) rotate(36.2)"/><path d="M-2.600 -1h2.400v-1.800L3 0L-.2 2.800V1H-2.600z" fill="#8a8a8a" transform="translate(360.5 101.8) rotate(107.6)"/><path d="M-2.600 -1h2.400v-1.800L3 0L-.2 2.800V1H-2.600z" fill="#8a8a8a" transform="translate(347.0 111.8) rotate(180.0)"/><path d="M-2.600 -1h2.400v-1.800L3 0L-.2 2.800V1H-2.600z" fill="#8a8a8a" transform="translate(333.3 101.8) rotate(-108.3)"/><path d="M-2.600 -1h2.400v-1.800L3 0L-.2 2.800V1H-2.600z" fill="#8a8a8a" transform="translate(338.4 85.8) rotate(-36.0)"/><circle cx="346.9" cy="79.6" r="6.4" fill="#d6d6d6" stroke="#8c8c8c" stroke-width="1"/><path d="M344.1 79.6H349.7" stroke="#8c8c8c" stroke-width="1"/><circle cx="363.7" cy="91.9" r="6.4" fill="#d6d6d6" stroke="#8c8c8c" stroke-width="1"/><path d="M360.9 91.9H366.5" stroke="#8c8c8c" stroke-width="1"/><circle cx="357.4" cy="111.8" r="6.4" fill="#d6d6d6" stroke="#8c8c8c" stroke-width="1"/><path d="M354.6 111.8H360.2" stroke="#8c8c8c" stroke-width="1"/><circle cx="336.6" cy="111.8" r="6.4" fill="#d6d6d6" stroke="#8c8c8c" stroke-width="1"/><path d="M333.8 111.8H339.4" stroke="#8c8c8c" stroke-width="1"/><circle cx="330.0" cy="91.9" r="6.4" fill="#d6d6d6" stroke="#8c8c8c" stroke-width="1"/><path d="M327.2 91.9H332.8" stroke="#8c8c8c" stroke-width="1"/><path d="M17.3 161L23.300 166.3L29.3 161V173.7L23.300 179L17.3 173.7z" fill="#d6d6d6" stroke="#fff" stroke-width="2.6" /><path d="M17.3 161L23.300 166.3L29.3 161V173.7L23.300 179L17.3 173.7z" fill="#d6d6d6" stroke="#8c8c8c" stroke-width="1" /><path d="M20.5 170.6H26.0" stroke="#8c8c8c" stroke-width="1"/><path d="M17.3 146.5L23.300 151.8L29.3 146.5V159.2L23.300 164.5L17.3 159.2z" fill="#d6d6d6" stroke="#fff" stroke-width="2.6" /><path d="M17.3 146.5L23.300 151.8L29.3 146.5V159.2L23.300 164.5L17.3 159.2z" fill="#d6d6d6" stroke="#8c8c8c" stroke-width="1" /><path d="M20.5 156.1H26.0" stroke="#8c8c8c" stroke-width="1"/><path d="M17.3 131.8L23.300 137.10000000000002L29.3 131.8V144.5L23.300 149.8L17.3 144.5z" fill="#d6d6d6" stroke="#fff" stroke-width="2.6" /><path d="M17.3 131.8L23.300 137.10000000000002L29.3 131.8V144.5L23.300 149.8L17.3 144.5z" fill="#d6d6d6" stroke="#8c8c8c" stroke-width="1" /><path d="M20.5 141.4H26.0" stroke="#8c8c8c" stroke-width="1"/><rect x="29.3" y="131.8" width="47.3" height="12.4" rx="1.2" fill="#fff" stroke="#8c8c8c" stroke-width="1"/><circle cx="33.3" cy="136.0" r="1.1" fill="#c4c4c4" stroke="#8c8c8c" stroke-width="0.7"/><path d="M36.3 136.0H42.3" stroke="#9a9a9a" stroke-width="0.9"/><circle cx="33.3" cy="140.2" r="1.1" fill="#c4c4c4" stroke="#8c8c8c" stroke-width="0.7"/><path d="M36.3 140.2H42.3" stroke="#9a9a9a" stroke-width="0.9"/><rect x="29.3" y="146.5" width="47.3" height="12.4" rx="1.2" fill="#fff" stroke="#8c8c8c" stroke-width="1"/><circle cx="33.3" cy="150.7" r="1.1" fill="#c4c4c4" stroke="#8c8c8c" stroke-width="0.7"/><path d="M36.3 150.7H42.3" stroke="#9a9a9a" stroke-width="0.9"/><circle cx="33.3" cy="154.9" r="1.1" fill="#c4c4c4" stroke="#8c8c8c" stroke-width="0.7"/><path d="M36.3 154.9H42.3" stroke="#9a9a9a" stroke-width="0.9"/><rect x="29.3" y="161.0" width="47.3" height="12.4" rx="1.2" fill="#fff" stroke="#8c8c8c" stroke-width="1"/><circle cx="33.3" cy="165.2" r="1.1" fill="#c4c4c4" stroke="#8c8c8c" stroke-width="0.7"/><path d="M36.3 165.2H42.3" stroke="#9a9a9a" stroke-width="0.9"/><circle cx="33.3" cy="169.4" r="1.1" fill="#c4c4c4" stroke="#8c8c8c" stroke-width="0.7"/><path d="M36.3 169.4H42.3" stroke="#9a9a9a" stroke-width="0.9"/><path d="M114.100 140.4H128.600L130.600 144.5L128.600 148.6H114.100L116.100 144.5z" fill="#fff" stroke="#8c8c8c" stroke-width="1" /><path d="M120.0 144.5H125.0" stroke="#8c8c8c" stroke-width="1"/><path d="M130.600 140.4H147.500L150.100 144.5L147.500 148.6H130.600L132.600 144.5z" fill="#fff" stroke="#8c8c8c" stroke-width="1" /><path d="M136.5 144.5H141.5" stroke="#8c8c8c" stroke-width="1"/><path d="M94.300 140.4H112L114.100 144.5L112 148.6H94.300L97 144.5z" fill="#d6d6d6" stroke="#8c8c8c" stroke-width="1" /><path d="M102.5 144.5H107.5" stroke="#8c8c8c" stroke-width="1"/><path d="M114.100 150.5H128.600L130.600 154.6L128.600 158.7H114.100L116.100 154.6z" fill="#fff" stroke="#8c8c8c" stroke-width="1" /><path d="M120.0 154.6H125.0" stroke="#8c8c8c" stroke-width="1"/><path d="M130.600 150.5H147.500L150.100 154.6L147.500 158.7H130.600L132.600 154.6z" fill="#fff" stroke="#8c8c8c" stroke-width="1" /><path d="M136.5 154.6H141.5" stroke="#8c8c8c" stroke-width="1"/><path d="M94.300 150.5H112L114.100 154.6L112 158.7H94.300L97 154.6z" fill="#d6d6d6" stroke="#8c8c8c" stroke-width="1" /><path d="M102.5 154.6H107.5" stroke="#8c8c8c" stroke-width="1"/><path d="M114.100 161.1H128.600L130.600 165.2L128.600 169.29999999999998H114.100L116.100 165.2z" fill="#fff" stroke="#8c8c8c" stroke-width="1" /><path d="M120.0 165.2H125.0" stroke="#8c8c8c" stroke-width="1"/><path d="M130.600 161.1H147.500L150.100 165.2L147.500 169.29999999999998H130.600L132.600 165.2z" fill="#fff" stroke="#8c8c8c" stroke-width="1" /><path d="M136.5 165.2H141.5" stroke="#8c8c8c" stroke-width="1"/><path d="M94.300 161.1H112L114.100 165.2L112 169.29999999999998H94.300L97 165.2z" fill="#d6d6d6" stroke="#8c8c8c" stroke-width="1" /><path d="M102.5 165.2H107.5" stroke="#8c8c8c" stroke-width="1"/><path d="M172.600 143H198.900V131.800L212.400 154.600L198.900 177.500V166.300H172.600z" fill="#fff" stroke="#8c8c8c" stroke-width="1" /><rect x="168.4" y="145.3" width="17.0" height="18.7" rx="1.2" fill="#d6d6d6" stroke="#8c8c8c" stroke-width="1"/><path d="M173.4 154.6H180.4" stroke="#8c8c8c" stroke-width="1"/><rect x="188.4" y="145.3" width="17.0" height="18.7" rx="1.2" fill="#d6d6d6" stroke="#8c8c8c" stroke-width="1"/><path d="M193.4 154.6H200.4" stroke="#8c8c8c" stroke-width="1"/><rect x="208.7" y="145.3" width="17.0" height="18.7" rx="1.2" fill="#d6d6d6" stroke="#8c8c8c" stroke-width="1"/><path d="M213.7 154.6H220.7" stroke="#8c8c8c" stroke-width="1"/><path d="M243.300 151H292V147.200L300.600 155.700L292 164.300V160.300H243.300L247.800 155.700z" fill="#fff" stroke="#8c8c8c" stroke-width="1" /><circle cx="253.3" cy="155.8" r="2.1" fill="#d6d6d6" stroke="#8c8c8c" stroke-width="0.9"/><circle cx="270.0" cy="155.8" r="2.1" fill="#d6d6d6" stroke="#8c8c8c" stroke-width="0.9"/><circle cx="286.5" cy="155.8" r="2.1" fill="#d6d6d6" stroke="#8c8c8c" stroke-width="0.9"/><path d="M248.5 141.1H253.8" stroke="#8c8c8c" stroke-width="1"/><path d="M284.0 141.1H289.0" stroke="#8c8c8c" stroke-width="1"/><path d="M266.2 168.2H271.5" stroke="#8c8c8c" stroke-width="1"/><path d="M333.6 152.800h3v-2l3 3.800-3 3.800v-2h-3z" fill="#fff" stroke="#8c8c8c" stroke-width="0.8" /><path d="M354.7 152.800h3v-2l3 3.800-3 3.800v-2h-3z" fill="#fff" stroke="#8c8c8c" stroke-width="0.8" /><rect x="318.3" y="149.0" width="15.3" height="11.3" rx="1.2" fill="#d6d6d6" stroke="#8c8c8c" stroke-width="1"/><path d="M323.6 154.6H328.3" stroke="#8c8c8c" stroke-width="1"/><rect x="339.4" y="149.0" width="15.3" height="11.3" rx="1.2" fill="#d6d6d6" stroke="#8c8c8c" stroke-width="1"/><path d="M344.7 154.6H349.4" stroke="#8c8c8c" stroke-width="1"/><rect x="360.4" y="149.0" width="15.3" height="11.3" rx="1.2" fill="#d6d6d6" stroke="#8c8c8c" stroke-width="1"/><path d="M365.7 154.6H370.4" stroke="#8c8c8c" stroke-width="1"/><rect x="24.8" y="191.0" width="19.2" height="18.8" rx="1.5" fill="#fff" stroke="#8c8c8c" stroke-width="1"/><rect x="25.3" y="203.5" width="18.200" height="5.800" fill="#d6d6d6"/><path d="M27.8 206.5H32.8" stroke="#8c8c8c" stroke-width="1"/><circle cx="42.8" cy="208.5" r="3.1" fill="#fff" stroke="#8c8c8c" stroke-width="1"/><rect x="48.8" y="191.0" width="19.2" height="18.8" rx="1.5" fill="#fff" stroke="#8c8c8c" stroke-width="1"/><rect x="49.3" y="203.5" width="18.200" height="5.800" fill="#d6d6d6"/><path d="M51.8 206.5H56.8" stroke="#8c8c8c" stroke-width="1"/><circle cx="66.8" cy="208.5" r="3.1" fill="#fff" stroke="#8c8c8c" stroke-width="1"/><rect x="37.5" y="215.0" width="19.2" height="18.8" rx="1.5" fill="#fff" stroke="#8c8c8c" stroke-width="1"/><rect x="38.0" y="227.5" width="18.200" height="5.800" fill="#d6d6d6"/><path d="M40.5 230.5H45.5" stroke="#8c8c8c" stroke-width="1"/><circle cx="55.5" cy="232.5" r="3.1" fill="#fff" stroke="#8c8c8c" stroke-width="1"/><rect x="87.200" y="186.700" width="70.500" height="54" fill="#fff" stroke="#c6c6c6" stroke-width="3.800"/><path d="M121.900 190.800L145.600 235.800H98.300z" fill="#d6d6d6" stroke="#8c8c8c" stroke-width="1" /><rect x="121.9" y="196.3" width="29.4" height="10.1" rx="1.2" fill="#fff" stroke="#8c8c8c" stroke-width="1"/><path d="M133.5 201.4H140.0" stroke="#8c8c8c" stroke-width="1"/><rect x="121.9" y="209.0" width="29.4" height="9.8" rx="1.2" fill="#fff" stroke="#8c8c8c" stroke-width="1"/><path d="M133.5 213.9H140.0" stroke="#8c8c8c" stroke-width="1"/><rect x="121.9" y="221.5" width="29.4" height="10.1" rx="1.2" fill="#fff" stroke="#8c8c8c" stroke-width="1"/><path d="M133.5 226.6H140.0" stroke="#8c8c8c" stroke-width="1"/><path d="M174.900 213.100L179.400 208.600V211.300H195.200V194.100H192.500L197 189.600L201.500 194.100H198.800V211.300H214.700V208.600L219.200 213.100L214.700 217.600V214.900H198.800V232.300H201.500L197 236.800L192.500 232.300H195.200V214.900H179.400V217.600z" fill="#fff" stroke="#8c8c8c" stroke-width="1" /><rect x="179.4" y="195.3" width="15.0" height="15.1" rx="1.5" fill="#d6d6d6" stroke="#8c8c8c" stroke-width="1"/><path d="M184.4 203.3H189.4" stroke="#8c8c8c" stroke-width="1"/><rect x="179.4" y="215.4" width="15.0" height="15.1" rx="1.5" fill="#d6d6d6" stroke="#8c8c8c" stroke-width="1"/><path d="M184.4 223.4H189.4" stroke="#8c8c8c" stroke-width="1"/><rect x="199.7" y="195.3" width="15.0" height="15.1" rx="1.5" fill="#d6d6d6" stroke="#8c8c8c" stroke-width="1"/><path d="M204.7 203.3H209.7" stroke="#8c8c8c" stroke-width="1"/><rect x="199.7" y="215.4" width="15.0" height="15.1" rx="1.5" fill="#d6d6d6" stroke="#8c8c8c" stroke-width="1"/><path d="M204.7 223.4H209.7" stroke="#8c8c8c" stroke-width="1"/><defs><clipPath id="vA"><circle cx="272.2" cy="204.9" r="13.2"/></clipPath><clipPath id="vB"><circle cx="262.8" cy="221.8" r="13.2"/></clipPath></defs><circle cx="262.8" cy="221.8" r="13.2" fill="#d6d6d6" clip-path="url(#vA)"/><circle cx="282" cy="221.8" r="13.2" fill="#d6d6d6" clip-path="url(#vA)"/><circle cx="282" cy="221.8" r="13.2" fill="#d6d6d6" clip-path="url(#vB)"/><g clip-path="url(#vA)"><circle cx="282" cy="221.8" r="13.2" fill="#8f8f8f" clip-path="url(#vB)"/></g><circle cx="272.2" cy="204.9" r="13.2" fill="none" stroke="#8c8c8c" stroke-width="1"/><circle cx="262.8" cy="221.8" r="13.2" fill="none" stroke="#8c8c8c" stroke-width="1"/><circle cx="282.0" cy="221.8" r="13.2" fill="none" stroke="#8c8c8c" stroke-width="1"/><path d="M268.5 204.5H275.5" stroke="#8c8c8c" stroke-width="1"/><path d="M259.0 222.3H266.5" stroke="#8c8c8c" stroke-width="1"/><path d="M278.0 221.3H286.0" stroke="#8c8c8c" stroke-width="1"/><circle cx="337.9" cy="216.6" r="17.7" fill="#d6d6d6" stroke="#8c8c8c" stroke-width="1"/><circle cx="337.9" cy="216.6" r="10.8" fill="#d6d6d6" stroke="#8c8c8c" stroke-width="1"/><circle cx="337.9" cy="216.6" r="4.8" fill="#d6d6d6" stroke="#8c8c8c" stroke-width="1"/><path d="M337.900 216.600L357.400 193.300H363.800M343 221L358 202.800H363.800M347.600 225.600L360.400 212H363.800" fill="none" stroke="#8c8c8c" stroke-width="1" /><path d="M367.0 193.3H373.4" stroke="#8c8c8c" stroke-width="1"/><path d="M367.0 202.8H373.4" stroke="#8c8c8c" stroke-width="1"/><path d="M367.0 212.0H373.4" stroke="#8c8c8c" stroke-width="1"/><path d="M1 251.500H411" stroke="#e1e1e1" stroke-width="1"/><path d="M4.500 258.800h9.500l2 2.500h.5v4.500H5l2.300-3.500z" fill="#5aab8b"/><rect x="11" y="263.500" width="11" height="7.500" fill="#fff" stroke="#666" stroke-width="1"/><path d="M13 266h1M15.500 266h5M13 268.500h1M15.500 268.500h5" stroke="#999" stroke-width=".9"/><g fill="#9a9a9a"><rect x="405.500" y="280" width="1.600" height="1.600"/><rect x="405.500" y="283.500" width="1.600" height="1.600"/><rect x="402" y="283.500" width="1.600" height="1.600"/></g></svg>
<span class="t" style="left:804.0px;top:402.2px;font-size:12.4px;color:#444;transform:scaleX(0.9721);">More SmartArt Graphics...</span>
<div class="b" style="left:804px;top:414.5px;width:10.5px;height:1.0px;background:#444;"></div>
</div>
</div>
</body></html>
